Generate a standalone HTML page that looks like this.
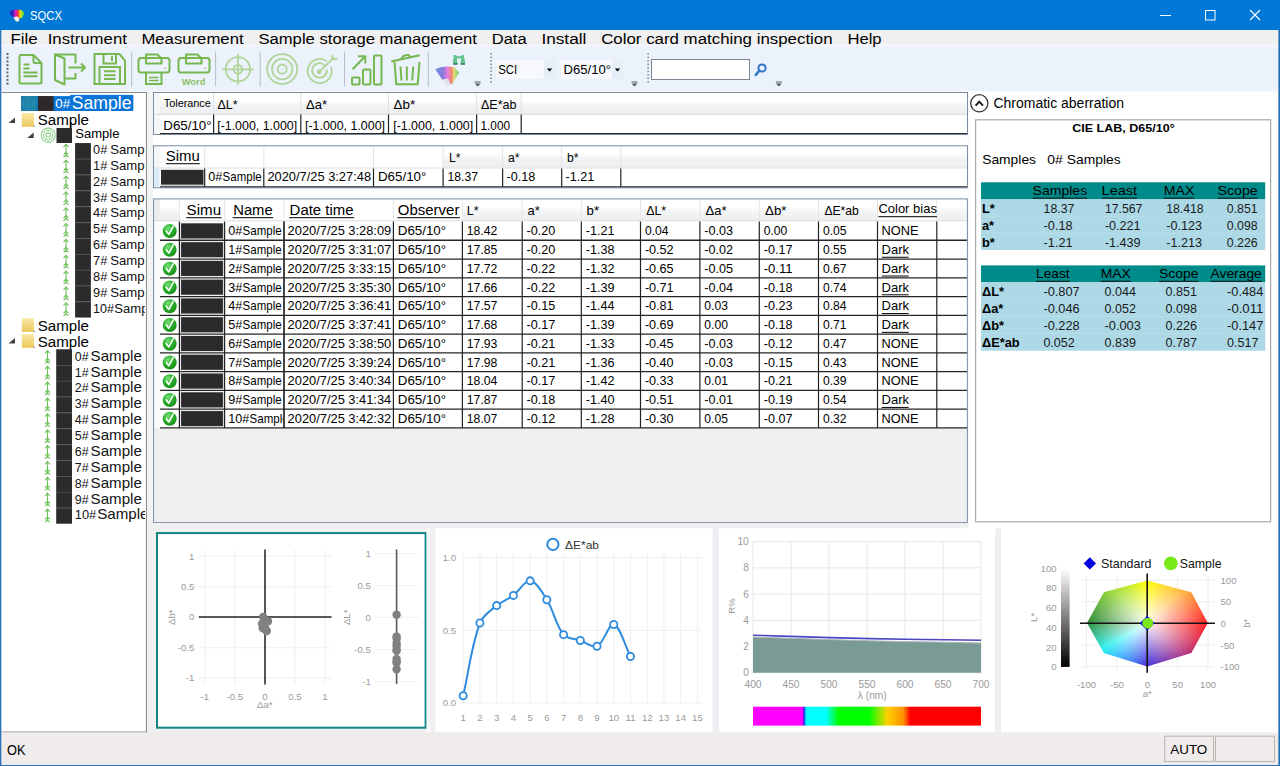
<!DOCTYPE html><html><head><meta charset="utf-8"><title>SQCX</title><style>html,body{margin:0;padding:0;width:1280px;height:766px;overflow:hidden;background:#F0F0F0}svg{display:block;font-family:"Liberation Sans",sans-serif}</style></head><body><svg width="1280" height="766" viewBox="0 0 1280 766"><rect x="0.00" y="0.00" width="1280.00" height="766.00" fill="#F0F0F0"/>
<rect x="0.00" y="0.00" width="1280.00" height="30.00" fill="#0078D7"/>
<text x="30.00" y="20.00" font-size="13" fill="#FFFFFF" textLength="32.00" lengthAdjust="spacingAndGlyphs">SQCX</text>
<defs><linearGradient id="fan" x1="9" y1="0" x2="24.5" y2="0" gradientUnits="userSpaceOnUse"><stop offset="0" stop-color="#3040E0"/><stop offset="0.22" stop-color="#2020B0"/><stop offset="0.4" stop-color="#D020D0"/><stop offset="0.58" stop-color="#F02828"/><stop offset="0.72" stop-color="#E8E020"/><stop offset="1" stop-color="#20D840"/></linearGradient></defs>
<path d="M9.3 12.5 Q11 9.8 15 9.8 L20 9.8 Q23.5 10.5 24 13 Q24 16.5 21 18 L18.5 19 L14.5 17.5 Q10.5 16 9.3 12.5 Z" fill="url(#fan)"/>
<path d="M13.5 17.8 Q16 15.8 18.5 17 L19.3 21.2 Q17 22 15.8 21.2 Z" fill="#F4F0E8"/>
<line x1="1160.00" y1="15.50" x2="1171.00" y2="15.50" stroke="#FFFFFF" stroke-width="1"/>
<rect x="1205.5" y="10.5" width="9.5" height="9.5" fill="none" stroke="#FFFFFF" stroke-width="1"/>
<line x1="1250.00" y1="10.00" x2="1260.00" y2="20.00" stroke="#FFFFFF" stroke-width="1.1"/>
<line x1="1260.00" y1="10.00" x2="1250.00" y2="20.00" stroke="#FFFFFF" stroke-width="1.1"/>
<rect x="0.00" y="30.00" width="1280.00" height="14.60" fill="#F0F0F0"/>
<rect x="0.00" y="44.60" width="1280.00" height="45.60" fill="#EBF2FB"/>
<rect x="0.00" y="90.20" width="1280.00" height="2.00" fill="#F3F5F8"/>
<rect x="0.00" y="44.60" width="1280.00" height="2.20" fill="#F3F6FA"/>
<text x="10.40" y="43.60" font-size="15.4" fill="#000" textLength="27.20" lengthAdjust="spacingAndGlyphs">File</text>
<text x="47.70" y="43.60" font-size="15.4" fill="#000" textLength="79.20" lengthAdjust="spacingAndGlyphs">Instrument</text>
<text x="141.40" y="43.60" font-size="15.4" fill="#000" textLength="102.20" lengthAdjust="spacingAndGlyphs">Measurement</text>
<text x="258.40" y="43.60" font-size="15.4" fill="#000" textLength="218.40" lengthAdjust="spacingAndGlyphs">Sample storage management</text>
<text x="491.70" y="43.60" font-size="15.4" fill="#000" textLength="35.00" lengthAdjust="spacingAndGlyphs">Data</text>
<text x="541.40" y="43.60" font-size="15.4" fill="#000" textLength="45.00" lengthAdjust="spacingAndGlyphs">Install</text>
<text x="601.20" y="43.60" font-size="15.4" fill="#000" textLength="231.40" lengthAdjust="spacingAndGlyphs">Color card matching inspection</text>
<text x="847.40" y="43.60" font-size="15.4" fill="#000" textLength="34.20" lengthAdjust="spacingAndGlyphs">Help</text>
<rect x="6.50" y="53.00" width="2.00" height="2.00" fill="#606870"/>
<rect x="6.50" y="56.70" width="2.00" height="2.00" fill="#606870"/>
<rect x="6.50" y="60.40" width="2.00" height="2.00" fill="#606870"/>
<rect x="6.50" y="64.10" width="2.00" height="2.00" fill="#606870"/>
<rect x="6.50" y="67.80" width="2.00" height="2.00" fill="#606870"/>
<rect x="6.50" y="71.50" width="2.00" height="2.00" fill="#606870"/>
<rect x="6.50" y="75.20" width="2.00" height="2.00" fill="#606870"/>
<rect x="6.50" y="78.90" width="2.00" height="2.00" fill="#606870"/>
<rect x="6.50" y="82.60" width="2.00" height="2.00" fill="#606870"/>
<g fill="none" stroke="#76B74F" stroke-width="2" stroke-linejoin="round"><path d="M19.5 56.5 Q19.5 55 21 55 L33.5 55 L41.5 63 L41.5 82 Q41.5 83.5 40 83.5 L21 83.5 Q19.5 83.5 19.5 82 Z"/><path d="M33.5 55 L33.5 61.5 Q33.5 63 35 63 L41.5 63"/><path d="M23.5 64.6 L29.5 64.6 M23.5 68.5 L29.5 68.5 M23.5 72.4 L37.5 72.4 M23.5 76.3 L37.5 76.3"/></g>
<g fill="none" stroke="#76B74F" stroke-width="2" stroke-linejoin="round"><path d="M55 54.5 L75.5 54.5 L75.5 63.5 M75.5 73 L75.5 78.5 L64.5 78.5"/><path d="M55 54.5 L64.5 58.5 L64.5 84.5 L55 80 Z"/><path d="M68.5 67.5 L85 67.5 M81 63.5 L85 67.5 L81 71.5"/></g>
<g fill="none" stroke="#76B74F" stroke-width="2" stroke-linejoin="miter"><path d="M94.5 54 L119.5 54 L125 60.5 L125 84 L94.5 84 Z"/><path d="M103.5 54 L103.5 63.5 L116 63.5 L116 54"/><path d="M99.5 84 L99.5 67 L120 67 L120 84"/><path d="M104 71.2 L115.5 71.2 M104 75.2 L115.5 75.2 M104 79 L115.5 79"/></g>
<rect x="111.00" y="56.00" width="2.00" height="5.00" fill="#76B74F"/>
<line x1="131.70" y1="51.50" x2="131.70" y2="86.50" stroke="#B9BEC6" stroke-width="1"/>
<line x1="215.60" y1="51.50" x2="215.60" y2="86.50" stroke="#B9BEC6" stroke-width="1"/>
<line x1="260.20" y1="51.50" x2="260.20" y2="86.50" stroke="#B9BEC6" stroke-width="1"/>
<line x1="344.50" y1="51.50" x2="344.50" y2="86.50" stroke="#B9BEC6" stroke-width="1"/>
<line x1="428.30" y1="51.50" x2="428.30" y2="86.50" stroke="#B9BEC6" stroke-width="1"/>
<g fill="none" stroke="#76B74F" stroke-width="2" stroke-linejoin="round"><rect x="138.5" y="58" width="31" height="14.5" rx="2.5"/><path d="M146 58 L146 54.5 L157.5 54.5 L161.5 58.5 L161.5 63.5 L146 63.5 Z"/></g>
<rect x="164.50" y="67.50" width="1.50" height="1.50" fill="#9CC680"/>
<g fill="none" stroke="#76B74F" stroke-width="2"><path d="M146 72.5 L146 84 L161.5 84 L161.5 72.5"/><path d="M149 77.5 L158.5 77.5 M149 80.5 L158.5 80.5" stroke-width="1.5"/></g>
<g fill="none" stroke="#76B74F" stroke-width="2" stroke-linejoin="round"><rect x="178.5" y="58" width="31" height="14.5" rx="2.5"/><path d="M186 58 L186 54.5 L197.5 54.5 L201.5 58.5 L201.5 63.5 L186 63.5 Z"/></g>
<rect x="204.50" y="67.50" width="1.50" height="1.50" fill="#9CC680"/>
<text x="181.80" y="84.60" font-size="9.5" fill="#8CC063" font-weight="bold" textLength="23.50" lengthAdjust="spacingAndGlyphs">Word</text>
<g fill="none" stroke="#B0D598" stroke-width="1.8"><circle cx="237.9" cy="69.3" r="12.2"/><circle cx="237.9" cy="69.3" r="4.3"/><path d="M222 69.3 L253.6 69.3 M237.9 54 L237.9 84.6"/></g>
<g fill="none" stroke="#B0D598" stroke-width="1.8"><circle cx="282.2" cy="69.1" r="15"/><circle cx="282.2" cy="69.1" r="10.2"/><circle cx="282.2" cy="69.1" r="4.6"/></g>
<rect x="281.70" y="68.60" width="1.00" height="1.00" fill="#B0D598"/>
<g fill="none" stroke="#B0D598" stroke-width="1.8"><path d="M327 61.5 A12 12 0 1 0 331 67"/><path d="M325 65.5 A7.3 7.3 0 1 0 326.8 69.5"/><path d="M319.1 71.9 L334 57.5 M332.5 54.5 L332.3 59 L337.3 59"/></g>
<circle cx="319.1" cy="71.9" r="2.3" fill="#B0D598"/>
<g fill="none" stroke="#76B74F" stroke-width="2" stroke-linejoin="round"><rect x="352" y="77.5" width="7.5" height="7" rx="1"/><rect x="363" y="69.5" width="7.5" height="15" rx="1"/><rect x="374" y="55.5" width="7.5" height="29" rx="1"/><path d="M352.6 69.3 L365 56.5 M358 56.3 L365.3 56.3 L365.3 63.5"/></g>
<g fill="none" stroke="#76B74F" stroke-width="2" stroke-linejoin="round"><path d="M394.5 62 L396.3 84.3 L417.7 84.3 L419.5 62"/><path d="M391.2 61.5 L419.8 55.2"/><path d="M401 59.5 Q403 54.5 408.5 55 L411 57.5"/><path d="M400.5 66.5 L401.5 80.5 M406.8 66.5 L406.8 80.5 M413.2 66.5 L412.2 80.5"/></g>
<defs><linearGradient id="fan2" x1="436" y1="0" x2="459" y2="0" gradientUnits="userSpaceOnUse"><stop offset="0" stop-color="#6C8CE0"/><stop offset="0.3" stop-color="#8A7ADC"/><stop offset="0.5" stop-color="#E77CE0"/><stop offset="0.68" stop-color="#F08870"/><stop offset="0.78" stop-color="#E8D878"/><stop offset="1" stop-color="#70D070"/></linearGradient></defs>
<path d="M435.3 69.3 Q444 64.5 454.5 67.6 L459.3 72.6 L452 84 L449.5 84.5 L446.5 80.5 L442 79.2 Z" fill="url(#fan2)"/>
<path d="M443.5 79.2 L448 78.5 L451 85 L446 85.5 Z" fill="#E0E2E8"/>
<g fill="#62C58E"><path d="M453.8 55 L456.3 55 L457.3 62 L458 64 L453 64.5 L452.8 62 Z"/><path d="M461.3 55 L463.8 55 L465 62 L465.2 64.5 L460.5 64 L460.8 62 Z"/><rect x="456" y="56.2" width="5.5" height="2.2"/></g>
<g fill="#3A7058"><rect x="453.2" y="63.3" width="4.5" height="1.5" rx="0.7"/><rect x="460.5" y="63.3" width="4.5" height="1.5" rx="0.7"/></g>
<g fill="#505860"><rect x="474.7" y="81.5" width="6" height="1"/><path d="M474.7 83.5 L480.7 83.5 L477.7 86.5 Z"/></g>
<g fill="#505860"><rect x="631.5" y="81.5" width="6" height="1"/><path d="M631.5 83.5 L637.5 83.5 L634.5 86.5 Z"/></g>
<g fill="#505860"><rect x="775.8" y="81.5" width="6" height="1"/><path d="M775.8 83.5 L781.8 83.5 L778.8 86.5 Z"/></g>
<rect x="490.50" y="53.00" width="1.20" height="1.60" fill="#6A7078"/>
<rect x="490.50" y="56.50" width="1.20" height="1.60" fill="#6A7078"/>
<rect x="490.50" y="60.00" width="1.20" height="1.60" fill="#6A7078"/>
<rect x="490.50" y="63.50" width="1.20" height="1.60" fill="#6A7078"/>
<rect x="490.50" y="67.00" width="1.20" height="1.60" fill="#6A7078"/>
<rect x="490.50" y="70.50" width="1.20" height="1.60" fill="#6A7078"/>
<rect x="490.50" y="74.00" width="1.20" height="1.60" fill="#6A7078"/>
<rect x="490.50" y="77.50" width="1.20" height="1.60" fill="#6A7078"/>
<rect x="490.50" y="81.00" width="1.20" height="1.60" fill="#6A7078"/>
<rect x="647.50" y="53.00" width="1.20" height="1.60" fill="#6A7078"/>
<rect x="647.50" y="56.50" width="1.20" height="1.60" fill="#6A7078"/>
<rect x="647.50" y="60.00" width="1.20" height="1.60" fill="#6A7078"/>
<rect x="647.50" y="63.50" width="1.20" height="1.60" fill="#6A7078"/>
<rect x="647.50" y="67.00" width="1.20" height="1.60" fill="#6A7078"/>
<rect x="647.50" y="70.50" width="1.20" height="1.60" fill="#6A7078"/>
<rect x="647.50" y="74.00" width="1.20" height="1.60" fill="#6A7078"/>
<rect x="647.50" y="77.50" width="1.20" height="1.60" fill="#6A7078"/>
<rect x="647.50" y="81.00" width="1.20" height="1.60" fill="#6A7078"/>
<rect x="496.00" y="60.00" width="59.00" height="18.80" fill="#F7F9FC"/>
<rect x="543.80" y="60.00" width="11.20" height="18.80" fill="#E6EEF8"/>
<text x="498.20" y="73.80" font-size="12.6" fill="#000" textLength="19.00" lengthAdjust="spacingAndGlyphs">SCI</text>
<path d="M546.8 68.6 L552.2 68.6 L549.5 71.6 Z" fill="#000"/>
<rect x="561.00" y="60.00" width="62.00" height="18.80" fill="#F7F9FC"/>
<rect x="612.00" y="60.00" width="11.00" height="18.80" fill="#E6EEF8"/>
<text x="563.50" y="73.80" font-size="12.6" fill="#000" textLength="47.50" lengthAdjust="spacingAndGlyphs">D65/10°</text>
<path d="M614.8 68.6 L620.2 68.6 L617.5 71.6 Z" fill="#000"/>
<rect x="651.5" y="59.5" width="98" height="20" fill="#FFFFFF" stroke="#7A8694" stroke-width="1"/>
<g><circle cx="762" cy="68" r="3.6" fill="none" stroke="#2E74C8" stroke-width="2"/><path d="M759.5 70.5 L755.8 74.8" stroke="#2E74C8" stroke-width="2.6" stroke-linecap="round"/></g>
<rect x="1.50" y="92.00" width="145.50" height="640.50" fill="#FFFFFF"/>
<line x1="1.50" y1="92.50" x2="147.00" y2="92.50" stroke="#888888" stroke-width="1"/>
<line x1="146.50" y1="92.00" x2="146.50" y2="732.50" stroke="#909090" stroke-width="1.2"/>
<line x1="1.50" y1="732.00" x2="147.00" y2="732.00" stroke="#909090" stroke-width="1.2"/>
<rect x="147.00" y="92.00" width="6.00" height="641.00" fill="#F2F3F5"/>
<defs><clipPath id="treeclip"><rect x="2" y="93" width="143" height="639"/></clipPath><linearGradient id="fold" x1="0" y1="0" x2="0" y2="1"><stop offset="0" stop-color="#FBEAA8"/><stop offset="1" stop-color="#E9C75A"/></linearGradient></defs>
<g clip-path="url(#treeclip)">
<rect x="21.00" y="96.10" width="112.20" height="14.90" fill="#0A74D6"/>
<rect x="70.20" y="94.90" width="63.00" height="15.70" fill="#0A74D6"/>
<rect x="21.00" y="96.10" width="16.50" height="14.90" fill="#1B7EA8"/>
<g fill="none" stroke="#2E95B0" stroke-width="1"><circle cx="29.2" cy="103.5" r="6.3"/><circle cx="29.2" cy="103.5" r="3.8"/><circle cx="29.2" cy="103.5" r="1.3"/></g>
<rect x="38.00" y="96.10" width="15.60" height="14.90" fill="#2E2A2A"/>
<text x="55.30" y="107.60" font-size="12.5" fill="#FFFFFF" textLength="14.80" lengthAdjust="spacingAndGlyphs">0#</text>
<text x="71.80" y="109.10" font-size="17.5" fill="#FFFFFF" textLength="59.80" lengthAdjust="spacingAndGlyphs">Sample</text>
<path d="M8.50 123.00 L15.00 123.00 L15.00 117.50 Z" fill="#404040"/>
<rect x="21.8" y="113" width="12.2" height="13.8" fill="url(#fold)"/>
<rect x="33.8" y="125.5" width="1.3" height="1.3" fill="#7A90C8"/>
<text x="37.70" y="124.70" font-size="15.5" fill="#000" textLength="51.20" lengthAdjust="spacingAndGlyphs">Sample</text>
<path d="M27.20 138.00 L33.70 138.00 L33.70 132.50 Z" fill="#404040"/>
<g fill="none" stroke="#8DD08A" stroke-width="1.1"><circle cx="48.2" cy="135.1" r="7"/><circle cx="48.2" cy="135.1" r="4.6"/><circle cx="48.2" cy="135.1" r="2.2"/></g>
<rect x="56.50" y="128.00" width="15.50" height="15.00" fill="#2B2B2D"/>
<line x1="70.80" y1="122.00" x2="70.80" y2="128.00" stroke="#000" stroke-width="1.2"/>
<text x="75.30" y="137.80" font-size="13.6" fill="#000" textLength="44.20" lengthAdjust="spacingAndGlyphs">Sample</text>
<g fill="none" stroke="#6CBF5A" stroke-width="1.1"><path d="M66 144.57999999999998 L66 156.57999999999998"/><path d="M63.5 147.07999999999998 L66 144.27999999999997 L68.5 147.07999999999998"/><path d="M63.5 154.57999999999998 L66 152.38 L68.5 154.57999999999998 M63.5 157.27999999999997 L66 155.07999999999998 L68.5 157.27999999999997"/></g>
<rect x="75.10" y="143.08" width="15.80" height="15.86" fill="#2B2B2D"/>
<text x="93.10" y="153.98" font-size="12.6" fill="#111" textLength="14.20" lengthAdjust="spacingAndGlyphs">0#</text>
<text x="110.30" y="153.98" font-size="13.2" fill="#111" textLength="44.50" lengthAdjust="spacingAndGlyphs">Sample</text>
<g fill="none" stroke="#6CBF5A" stroke-width="1.1"><path d="M66 160.44 L66 172.44"/><path d="M63.5 162.94 L66 160.14 L68.5 162.94"/><path d="M63.5 170.44 L66 168.24 L68.5 170.44 M63.5 173.14 L66 170.94 L68.5 173.14"/></g>
<rect x="75.10" y="158.94" width="15.80" height="15.86" fill="#2B2B2D"/>
<line x1="75.10" y1="159.24" x2="90.90" y2="159.24" stroke="#606060" stroke-width="0.6"/>
<text x="93.10" y="169.84" font-size="12.6" fill="#111" textLength="14.20" lengthAdjust="spacingAndGlyphs">1#</text>
<text x="110.30" y="169.84" font-size="13.2" fill="#111" textLength="44.50" lengthAdjust="spacingAndGlyphs">Sample</text>
<g fill="none" stroke="#6CBF5A" stroke-width="1.1"><path d="M66 176.3 L66 188.3"/><path d="M63.5 178.8 L66 176.0 L68.5 178.8"/><path d="M63.5 186.3 L66 184.10000000000002 L68.5 186.3 M63.5 189.0 L66 186.8 L68.5 189.0"/></g>
<rect x="75.10" y="174.80" width="15.80" height="15.86" fill="#2B2B2D"/>
<line x1="75.10" y1="175.10" x2="90.90" y2="175.10" stroke="#606060" stroke-width="0.6"/>
<text x="93.10" y="185.70" font-size="12.6" fill="#111" textLength="14.20" lengthAdjust="spacingAndGlyphs">2#</text>
<text x="110.30" y="185.70" font-size="13.2" fill="#111" textLength="44.50" lengthAdjust="spacingAndGlyphs">Sample</text>
<g fill="none" stroke="#6CBF5A" stroke-width="1.1"><path d="M66 192.16 L66 204.16"/><path d="M63.5 194.66 L66 191.85999999999999 L68.5 194.66"/><path d="M63.5 202.16 L66 199.96 L68.5 202.16 M63.5 204.85999999999999 L66 202.66 L68.5 204.85999999999999"/></g>
<rect x="75.10" y="190.66" width="15.80" height="15.86" fill="#2B2B2D"/>
<line x1="75.10" y1="190.96" x2="90.90" y2="190.96" stroke="#606060" stroke-width="0.6"/>
<text x="93.10" y="201.56" font-size="12.6" fill="#111" textLength="14.20" lengthAdjust="spacingAndGlyphs">3#</text>
<text x="110.30" y="201.56" font-size="13.2" fill="#111" textLength="44.50" lengthAdjust="spacingAndGlyphs">Sample</text>
<g fill="none" stroke="#6CBF5A" stroke-width="1.1"><path d="M66 208.01999999999998 L66 220.01999999999998"/><path d="M63.5 210.51999999999998 L66 207.71999999999997 L68.5 210.51999999999998"/><path d="M63.5 218.01999999999998 L66 215.82 L68.5 218.01999999999998 M63.5 220.71999999999997 L66 218.51999999999998 L68.5 220.71999999999997"/></g>
<rect x="75.10" y="206.52" width="15.80" height="15.86" fill="#2B2B2D"/>
<line x1="75.10" y1="206.82" x2="90.90" y2="206.82" stroke="#606060" stroke-width="0.6"/>
<text x="93.10" y="217.42" font-size="12.6" fill="#111" textLength="14.20" lengthAdjust="spacingAndGlyphs">4#</text>
<text x="110.30" y="217.42" font-size="13.2" fill="#111" textLength="44.50" lengthAdjust="spacingAndGlyphs">Sample</text>
<g fill="none" stroke="#6CBF5A" stroke-width="1.1"><path d="M66 223.88 L66 235.88"/><path d="M63.5 226.38 L66 223.57999999999998 L68.5 226.38"/><path d="M63.5 233.88 L66 231.68 L68.5 233.88 M63.5 236.57999999999998 L66 234.38 L68.5 236.57999999999998"/></g>
<rect x="75.10" y="222.38" width="15.80" height="15.86" fill="#2B2B2D"/>
<line x1="75.10" y1="222.68" x2="90.90" y2="222.68" stroke="#606060" stroke-width="0.6"/>
<text x="93.10" y="233.28" font-size="12.6" fill="#111" textLength="14.20" lengthAdjust="spacingAndGlyphs">5#</text>
<text x="110.30" y="233.28" font-size="13.2" fill="#111" textLength="44.50" lengthAdjust="spacingAndGlyphs">Sample</text>
<g fill="none" stroke="#6CBF5A" stroke-width="1.1"><path d="M66 239.74 L66 251.74"/><path d="M63.5 242.24 L66 239.44 L68.5 242.24"/><path d="M63.5 249.74 L66 247.54000000000002 L68.5 249.74 M63.5 252.44 L66 250.24 L68.5 252.44"/></g>
<rect x="75.10" y="238.24" width="15.80" height="15.86" fill="#2B2B2D"/>
<line x1="75.10" y1="238.54" x2="90.90" y2="238.54" stroke="#606060" stroke-width="0.6"/>
<text x="93.10" y="249.14" font-size="12.6" fill="#111" textLength="14.20" lengthAdjust="spacingAndGlyphs">6#</text>
<text x="110.30" y="249.14" font-size="13.2" fill="#111" textLength="44.50" lengthAdjust="spacingAndGlyphs">Sample</text>
<g fill="none" stroke="#6CBF5A" stroke-width="1.1"><path d="M66 255.6 L66 267.6"/><path d="M63.5 258.1 L66 255.29999999999998 L68.5 258.1"/><path d="M63.5 265.6 L66 263.4 L68.5 265.6 M63.5 268.3 L66 266.1 L68.5 268.3"/></g>
<rect x="75.10" y="254.10" width="15.80" height="15.86" fill="#2B2B2D"/>
<line x1="75.10" y1="254.40" x2="90.90" y2="254.40" stroke="#606060" stroke-width="0.6"/>
<text x="93.10" y="265.00" font-size="12.6" fill="#111" textLength="14.20" lengthAdjust="spacingAndGlyphs">7#</text>
<text x="110.30" y="265.00" font-size="13.2" fill="#111" textLength="44.50" lengthAdjust="spacingAndGlyphs">Sample</text>
<g fill="none" stroke="#6CBF5A" stroke-width="1.1"><path d="M66 271.46 L66 283.46"/><path d="M63.5 273.96 L66 271.15999999999997 L68.5 273.96"/><path d="M63.5 281.46 L66 279.26 L68.5 281.46 M63.5 284.15999999999997 L66 281.96 L68.5 284.15999999999997"/></g>
<rect x="75.10" y="269.96" width="15.80" height="15.86" fill="#2B2B2D"/>
<line x1="75.10" y1="270.26" x2="90.90" y2="270.26" stroke="#606060" stroke-width="0.6"/>
<text x="93.10" y="280.86" font-size="12.6" fill="#111" textLength="14.20" lengthAdjust="spacingAndGlyphs">8#</text>
<text x="110.30" y="280.86" font-size="13.2" fill="#111" textLength="44.50" lengthAdjust="spacingAndGlyphs">Sample</text>
<g fill="none" stroke="#6CBF5A" stroke-width="1.1"><path d="M66 287.32 L66 299.32"/><path d="M63.5 289.82 L66 287.02 L68.5 289.82"/><path d="M63.5 297.32 L66 295.12 L68.5 297.32 M63.5 300.02 L66 297.82 L68.5 300.02"/></g>
<rect x="75.10" y="285.82" width="15.80" height="15.86" fill="#2B2B2D"/>
<line x1="75.10" y1="286.12" x2="90.90" y2="286.12" stroke="#606060" stroke-width="0.6"/>
<text x="93.10" y="296.72" font-size="12.6" fill="#111" textLength="14.20" lengthAdjust="spacingAndGlyphs">9#</text>
<text x="110.30" y="296.72" font-size="13.2" fill="#111" textLength="44.50" lengthAdjust="spacingAndGlyphs">Sample</text>
<g fill="none" stroke="#6CBF5A" stroke-width="1.1"><path d="M66 303.18 L66 315.18"/><path d="M63.5 305.68 L66 302.88 L68.5 305.68"/><path d="M63.5 313.18 L66 310.98 L68.5 313.18 M63.5 315.88 L66 313.68 L68.5 315.88"/></g>
<rect x="75.10" y="301.68" width="15.80" height="15.86" fill="#2B2B2D"/>
<line x1="75.10" y1="301.98" x2="90.90" y2="301.98" stroke="#606060" stroke-width="0.6"/>
<text x="93.10" y="312.58" font-size="12.6" fill="#111" textLength="21.00" lengthAdjust="spacingAndGlyphs">10#</text>
<text x="114.30" y="312.58" font-size="13.2" fill="#111" textLength="44.50" lengthAdjust="spacingAndGlyphs">Sample</text>
<rect x="21.8" y="318.14" width="12.2" height="13.8" fill="url(#fold)"/>
<rect x="33.8" y="330.64" width="1.3" height="1.3" fill="#7A90C8"/>
<text x="37.70" y="330.74" font-size="15.5" fill="#000" textLength="51.20" lengthAdjust="spacingAndGlyphs">Sample</text>
<path d="M8.50 343.40 L15.00 343.40 L15.00 337.90 Z" fill="#404040"/>
<rect x="21.8" y="334.0" width="12.2" height="13.8" fill="url(#fold)"/>
<rect x="33.8" y="346.5" width="1.3" height="1.3" fill="#7A90C8"/>
<text x="37.70" y="346.60" font-size="15.5" fill="#000" textLength="51.20" lengthAdjust="spacingAndGlyphs">Sample</text>
<g fill="none" stroke="#6CBF5A" stroke-width="1.1"><path d="M47.5 350.76 L47.5 362.76"/><path d="M45.0 353.26 L47.5 350.46 L50.0 353.26"/><path d="M45.0 360.76 L47.5 358.56 L50.0 360.76 M45.0 363.46 L47.5 361.26 L50.0 363.46"/></g>
<rect x="56.20" y="349.26" width="15.80" height="15.86" fill="#2B2B2D"/>
<text x="74.80" y="360.76" font-size="13.2" fill="#111" textLength="13.80" lengthAdjust="spacingAndGlyphs">0#</text>
<text x="90.60" y="360.76" font-size="15" fill="#111" textLength="51.20" lengthAdjust="spacingAndGlyphs">Sample</text>
<g fill="none" stroke="#6CBF5A" stroke-width="1.1"><path d="M47.5 366.62 L47.5 378.62"/><path d="M45.0 369.12 L47.5 366.32 L50.0 369.12"/><path d="M45.0 376.62 L47.5 374.42 L50.0 376.62 M45.0 379.32 L47.5 377.12 L50.0 379.32"/></g>
<rect x="56.20" y="365.12" width="15.80" height="15.86" fill="#2B2B2D"/>
<line x1="56.20" y1="365.42" x2="72.00" y2="365.42" stroke="#606060" stroke-width="0.6"/>
<text x="74.80" y="376.62" font-size="13.2" fill="#111" textLength="13.80" lengthAdjust="spacingAndGlyphs">1#</text>
<text x="90.60" y="376.62" font-size="15" fill="#111" textLength="51.20" lengthAdjust="spacingAndGlyphs">Sample</text>
<g fill="none" stroke="#6CBF5A" stroke-width="1.1"><path d="M47.5 382.48 L47.5 394.48"/><path d="M45.0 384.98 L47.5 382.18 L50.0 384.98"/><path d="M45.0 392.48 L47.5 390.28000000000003 L50.0 392.48 M45.0 395.18 L47.5 392.98 L50.0 395.18"/></g>
<rect x="56.20" y="380.98" width="15.80" height="15.86" fill="#2B2B2D"/>
<line x1="56.20" y1="381.28" x2="72.00" y2="381.28" stroke="#606060" stroke-width="0.6"/>
<text x="74.80" y="392.48" font-size="13.2" fill="#111" textLength="13.80" lengthAdjust="spacingAndGlyphs">2#</text>
<text x="90.60" y="392.48" font-size="15" fill="#111" textLength="51.20" lengthAdjust="spacingAndGlyphs">Sample</text>
<g fill="none" stroke="#6CBF5A" stroke-width="1.1"><path d="M47.5 398.34 L47.5 410.34"/><path d="M45.0 400.84 L47.5 398.03999999999996 L50.0 400.84"/><path d="M45.0 408.34 L47.5 406.14 L50.0 408.34 M45.0 411.03999999999996 L47.5 408.84 L50.0 411.03999999999996"/></g>
<rect x="56.20" y="396.84" width="15.80" height="15.86" fill="#2B2B2D"/>
<line x1="56.20" y1="397.14" x2="72.00" y2="397.14" stroke="#606060" stroke-width="0.6"/>
<text x="74.80" y="408.34" font-size="13.2" fill="#111" textLength="13.80" lengthAdjust="spacingAndGlyphs">3#</text>
<text x="90.60" y="408.34" font-size="15" fill="#111" textLength="51.20" lengthAdjust="spacingAndGlyphs">Sample</text>
<g fill="none" stroke="#6CBF5A" stroke-width="1.1"><path d="M47.5 414.2 L47.5 426.2"/><path d="M45.0 416.7 L47.5 413.9 L50.0 416.7"/><path d="M45.0 424.2 L47.5 422.0 L50.0 424.2 M45.0 426.9 L47.5 424.7 L50.0 426.9"/></g>
<rect x="56.20" y="412.70" width="15.80" height="15.86" fill="#2B2B2D"/>
<line x1="56.20" y1="413.00" x2="72.00" y2="413.00" stroke="#606060" stroke-width="0.6"/>
<text x="74.80" y="424.20" font-size="13.2" fill="#111" textLength="13.80" lengthAdjust="spacingAndGlyphs">4#</text>
<text x="90.60" y="424.20" font-size="15" fill="#111" textLength="51.20" lengthAdjust="spacingAndGlyphs">Sample</text>
<g fill="none" stroke="#6CBF5A" stroke-width="1.1"><path d="M47.5 430.06 L47.5 442.06"/><path d="M45.0 432.56 L47.5 429.76 L50.0 432.56"/><path d="M45.0 440.06 L47.5 437.86 L50.0 440.06 M45.0 442.76 L47.5 440.56 L50.0 442.76"/></g>
<rect x="56.20" y="428.56" width="15.80" height="15.86" fill="#2B2B2D"/>
<line x1="56.20" y1="428.86" x2="72.00" y2="428.86" stroke="#606060" stroke-width="0.6"/>
<text x="74.80" y="440.06" font-size="13.2" fill="#111" textLength="13.80" lengthAdjust="spacingAndGlyphs">5#</text>
<text x="90.60" y="440.06" font-size="15" fill="#111" textLength="51.20" lengthAdjust="spacingAndGlyphs">Sample</text>
<g fill="none" stroke="#6CBF5A" stroke-width="1.1"><path d="M47.5 445.91999999999996 L47.5 457.91999999999996"/><path d="M45.0 448.41999999999996 L47.5 445.61999999999995 L50.0 448.41999999999996"/><path d="M45.0 455.91999999999996 L47.5 453.71999999999997 L50.0 455.91999999999996 M45.0 458.61999999999995 L47.5 456.41999999999996 L50.0 458.61999999999995"/></g>
<rect x="56.20" y="444.42" width="15.80" height="15.86" fill="#2B2B2D"/>
<line x1="56.20" y1="444.72" x2="72.00" y2="444.72" stroke="#606060" stroke-width="0.6"/>
<text x="74.80" y="455.92" font-size="13.2" fill="#111" textLength="13.80" lengthAdjust="spacingAndGlyphs">6#</text>
<text x="90.60" y="455.92" font-size="15" fill="#111" textLength="51.20" lengthAdjust="spacingAndGlyphs">Sample</text>
<g fill="none" stroke="#6CBF5A" stroke-width="1.1"><path d="M47.5 461.78 L47.5 473.78"/><path d="M45.0 464.28 L47.5 461.47999999999996 L50.0 464.28"/><path d="M45.0 471.78 L47.5 469.58 L50.0 471.78 M45.0 474.47999999999996 L47.5 472.28 L50.0 474.47999999999996"/></g>
<rect x="56.20" y="460.28" width="15.80" height="15.86" fill="#2B2B2D"/>
<line x1="56.20" y1="460.58" x2="72.00" y2="460.58" stroke="#606060" stroke-width="0.6"/>
<text x="74.80" y="471.78" font-size="13.2" fill="#111" textLength="13.80" lengthAdjust="spacingAndGlyphs">7#</text>
<text x="90.60" y="471.78" font-size="15" fill="#111" textLength="51.20" lengthAdjust="spacingAndGlyphs">Sample</text>
<g fill="none" stroke="#6CBF5A" stroke-width="1.1"><path d="M47.5 477.64 L47.5 489.64"/><path d="M45.0 480.14 L47.5 477.34 L50.0 480.14"/><path d="M45.0 487.64 L47.5 485.44 L50.0 487.64 M45.0 490.34 L47.5 488.14 L50.0 490.34"/></g>
<rect x="56.20" y="476.14" width="15.80" height="15.86" fill="#2B2B2D"/>
<line x1="56.20" y1="476.44" x2="72.00" y2="476.44" stroke="#606060" stroke-width="0.6"/>
<text x="74.80" y="487.64" font-size="13.2" fill="#111" textLength="13.80" lengthAdjust="spacingAndGlyphs">8#</text>
<text x="90.60" y="487.64" font-size="15" fill="#111" textLength="51.20" lengthAdjust="spacingAndGlyphs">Sample</text>
<g fill="none" stroke="#6CBF5A" stroke-width="1.1"><path d="M47.5 493.5 L47.5 505.5"/><path d="M45.0 496.0 L47.5 493.2 L50.0 496.0"/><path d="M45.0 503.5 L47.5 501.3 L50.0 503.5 M45.0 506.2 L47.5 504.0 L50.0 506.2"/></g>
<rect x="56.20" y="492.00" width="15.80" height="15.86" fill="#2B2B2D"/>
<line x1="56.20" y1="492.30" x2="72.00" y2="492.30" stroke="#606060" stroke-width="0.6"/>
<text x="74.80" y="503.50" font-size="13.2" fill="#111" textLength="13.80" lengthAdjust="spacingAndGlyphs">9#</text>
<text x="90.60" y="503.50" font-size="15" fill="#111" textLength="51.20" lengthAdjust="spacingAndGlyphs">Sample</text>
<g fill="none" stroke="#6CBF5A" stroke-width="1.1"><path d="M47.5 509.36 L47.5 521.36"/><path d="M45.0 511.86 L47.5 509.06 L50.0 511.86"/><path d="M45.0 519.36 L47.5 517.16 L50.0 519.36 M45.0 522.0600000000001 L47.5 519.86 L50.0 522.0600000000001"/></g>
<rect x="56.20" y="507.86" width="15.80" height="15.86" fill="#2B2B2D"/>
<line x1="56.20" y1="508.16" x2="72.00" y2="508.16" stroke="#606060" stroke-width="0.6"/>
<text x="74.80" y="519.36" font-size="13.2" fill="#111" textLength="21.50" lengthAdjust="spacingAndGlyphs">10#</text>
<text x="97.20" y="519.36" font-size="15" fill="#111" textLength="51.20" lengthAdjust="spacingAndGlyphs">Sample</text>
</g>
<defs><linearGradient id="hdrg" x1="0" y1="0" x2="0" y2="1"><stop offset="0" stop-color="#FFFFFF"/><stop offset="0.36" stop-color="#FFFFFF"/><stop offset="0.56" stop-color="#F3F4F6"/><stop offset="1" stop-color="#EDEEF0"/></linearGradient><radialGradient id="chk" cx="0.38" cy="0.3" r="0.75"><stop offset="0" stop-color="#7BE07B"/><stop offset="0.45" stop-color="#2FB52F"/><stop offset="1" stop-color="#178A17"/></radialGradient></defs>
<rect x="153.00" y="91.50" width="815.50" height="431.00" fill="#FFFFFF"/>
<rect x="153.50" y="92.40" width="814.00" height="42.50" fill="#FFFFFF"/>
<rect x="154.00" y="93.00" width="813.00" height="21.00" fill="url(#hdrg)"/>
<rect x="154.00" y="93.00" width="6.00" height="41.00" fill="#F6F6F6"/>
<line x1="154.00" y1="114.30" x2="967.00" y2="114.30" stroke="#D9D9D9" stroke-width="1"/>
<line x1="213.60" y1="93.00" x2="213.60" y2="114.00" stroke="#E2E2E2" stroke-width="1"/>
<line x1="213.60" y1="114.50" x2="213.60" y2="133.50" stroke="#222" stroke-width="1.2"/>
<line x1="300.80" y1="93.00" x2="300.80" y2="114.00" stroke="#E2E2E2" stroke-width="1"/>
<line x1="300.80" y1="114.50" x2="300.80" y2="133.50" stroke="#222" stroke-width="1.2"/>
<line x1="388.50" y1="93.00" x2="388.50" y2="114.00" stroke="#E2E2E2" stroke-width="1"/>
<line x1="388.50" y1="114.50" x2="388.50" y2="133.50" stroke="#222" stroke-width="1.2"/>
<line x1="476.60" y1="93.00" x2="476.60" y2="114.00" stroke="#E2E2E2" stroke-width="1"/>
<line x1="476.60" y1="114.50" x2="476.60" y2="133.50" stroke="#222" stroke-width="1.2"/>
<line x1="521.20" y1="93.00" x2="521.20" y2="114.00" stroke="#E2E2E2" stroke-width="1"/>
<line x1="521.20" y1="114.50" x2="521.20" y2="133.50" stroke="#222" stroke-width="1.2"/>
<line x1="160.00" y1="133.60" x2="967.00" y2="133.60" stroke="#2A2A2A" stroke-width="1.4"/>
<rect x="153.5" y="92.5" width="814" height="42" fill="none" stroke="#7B8CA0" stroke-width="1"/>
<text x="163.80" y="106.80" font-size="11" fill="#000" textLength="47.00" lengthAdjust="spacingAndGlyphs">Tolerance</text>
<text x="217.60" y="108.70" font-size="12.8" fill="#000" textLength="20.00" lengthAdjust="spacingAndGlyphs">ΔL*</text>
<text x="306.00" y="108.70" font-size="12.8" fill="#000" textLength="21.00" lengthAdjust="spacingAndGlyphs">Δa*</text>
<text x="393.60" y="108.70" font-size="12.8" fill="#000" textLength="21.50" lengthAdjust="spacingAndGlyphs">Δb*</text>
<text x="481.00" y="108.70" font-size="12.8" fill="#000" textLength="35.50" lengthAdjust="spacingAndGlyphs">ΔE*ab</text>
<text x="163.30" y="129.60" font-size="13.33" fill="#000" textLength="48.30" lengthAdjust="spacingAndGlyphs">D65/10°</text>
<text x="217.20" y="129.60" font-size="13.33" fill="#000" textLength="80.00" lengthAdjust="spacingAndGlyphs">[-1.000, 1.000]</text>
<text x="305.00" y="129.60" font-size="13.33" fill="#000" textLength="80.00" lengthAdjust="spacingAndGlyphs">[-1.000, 1.000]</text>
<text x="393.20" y="129.60" font-size="13.33" fill="#000" textLength="80.00" lengthAdjust="spacingAndGlyphs">[-1.000, 1.000]</text>
<text x="480.50" y="129.60" font-size="13.33" fill="#000" textLength="29.50" lengthAdjust="spacingAndGlyphs">1.000</text>
<rect x="153.50" y="145.60" width="814.00" height="42.40" fill="#FFFFFF"/>
<rect x="154.00" y="146.00" width="6.00" height="41.00" fill="#F6F6F6"/>
<rect x="443.10" y="146.20" width="524.00" height="21.60" fill="url(#hdrg)"/>
<line x1="154.00" y1="168.00" x2="967.00" y2="168.00" stroke="#DEDEDE" stroke-width="1"/>
<line x1="204.70" y1="146.20" x2="204.70" y2="168.00" stroke="#E4E4E4" stroke-width="1"/>
<line x1="204.70" y1="168.50" x2="204.70" y2="187.00" stroke="#222" stroke-width="1.2"/>
<line x1="263.80" y1="146.20" x2="263.80" y2="168.00" stroke="#E4E4E4" stroke-width="1"/>
<line x1="263.80" y1="168.50" x2="263.80" y2="187.00" stroke="#222" stroke-width="1.2"/>
<line x1="373.50" y1="146.20" x2="373.50" y2="168.00" stroke="#E4E4E4" stroke-width="1"/>
<line x1="373.50" y1="168.50" x2="373.50" y2="187.00" stroke="#222" stroke-width="1.2"/>
<line x1="443.10" y1="146.20" x2="443.10" y2="168.00" stroke="#E4E4E4" stroke-width="1"/>
<line x1="443.10" y1="168.50" x2="443.10" y2="187.00" stroke="#222" stroke-width="1.2"/>
<line x1="502.60" y1="146.20" x2="502.60" y2="168.00" stroke="#E4E4E4" stroke-width="1"/>
<line x1="502.60" y1="168.50" x2="502.60" y2="187.00" stroke="#222" stroke-width="1.2"/>
<line x1="561.70" y1="146.20" x2="561.70" y2="168.00" stroke="#E4E4E4" stroke-width="1"/>
<line x1="561.70" y1="168.50" x2="561.70" y2="187.00" stroke="#222" stroke-width="1.2"/>
<line x1="620.80" y1="146.20" x2="620.80" y2="168.00" stroke="#E4E4E4" stroke-width="1"/>
<line x1="620.80" y1="168.50" x2="620.80" y2="187.00" stroke="#222" stroke-width="1.2"/>
<line x1="160.00" y1="187.00" x2="967.00" y2="187.00" stroke="#2A2A2A" stroke-width="1.4"/>
<rect x="153.5" y="145.8" width="814" height="42" fill="none" stroke="#7B8CA0" stroke-width="1"/>
<rect x="154.20" y="169.00" width="5.00" height="18.00" fill="#DCEBF8"/>
<text x="165.80" y="160.70" font-size="14.8" fill="#000" textLength="34.00" lengthAdjust="spacingAndGlyphs">Simu</text>
<line x1="166.00" y1="163.60" x2="199.80" y2="163.60" stroke="#303030" stroke-width="1.2"/>
<rect x="161.00" y="169.80" width="42.50" height="15.00" fill="#2B2B2D"/>
<line x1="160.50" y1="185.20" x2="204.00" y2="185.20" stroke="#B8B8B8" stroke-width="1"/>
<text x="208.30" y="181.40" font-size="12.3" fill="#000" textLength="14.00" lengthAdjust="spacingAndGlyphs">0#</text>
<text x="222.60" y="181.40" font-size="13.2" fill="#000" textLength="39.00" lengthAdjust="spacingAndGlyphs">Sample</text>
<text x="267.40" y="181.40" font-size="13.33" fill="#000" textLength="103.64" lengthAdjust="spacingAndGlyphs">2020/7/25 3:27:48</text>
<text x="378.00" y="181.40" font-size="13.33" fill="#000" textLength="48.30" lengthAdjust="spacingAndGlyphs">D65/10°</text>
<text x="447.50" y="181.40" font-size="13.33" fill="#000" textLength="30.57" lengthAdjust="spacingAndGlyphs">18.37</text>
<text x="506.50" y="181.40" font-size="13.33" fill="#000" textLength="28.75" lengthAdjust="spacingAndGlyphs">-0.18</text>
<text x="565.50" y="181.40" font-size="13.33" fill="#000" textLength="28.75" lengthAdjust="spacingAndGlyphs">-1.21</text>
<text x="449.00" y="161.70" font-size="12.5" fill="#000" textLength="11.50" lengthAdjust="spacingAndGlyphs">L*</text>
<text x="508.00" y="161.70" font-size="12.5" fill="#000" textLength="11.50" lengthAdjust="spacingAndGlyphs">a*</text>
<text x="567.00" y="161.70" font-size="12.5" fill="#000" textLength="11.50" lengthAdjust="spacingAndGlyphs">b*</text>
<rect x="153.50" y="198.80" width="814.00" height="323.80" fill="#EFEFEF"/>
<rect x="154.00" y="199.00" width="813.00" height="22.00" fill="#FFFFFF"/>
<rect x="160.00" y="199.20" width="19.40" height="21.60" fill="url(#hdrg)"/>
<rect x="462.40" y="199.20" width="415.10" height="21.60" fill="url(#hdrg)"/>
<rect x="936.80" y="199.20" width="30.20" height="21.60" fill="url(#hdrg)"/>
<rect x="154.00" y="199.20" width="6.00" height="21.60" fill="#EEEEEE"/>
<line x1="154.00" y1="220.80" x2="967.00" y2="220.80" stroke="#DCDCDC" stroke-width="1"/>
<line x1="179.40" y1="199.20" x2="179.40" y2="220.50" stroke="#E6E6E6" stroke-width="1"/>
<line x1="224.60" y1="199.20" x2="224.60" y2="220.50" stroke="#E6E6E6" stroke-width="1"/>
<line x1="284.00" y1="199.20" x2="284.00" y2="220.50" stroke="#E6E6E6" stroke-width="1"/>
<line x1="393.40" y1="199.20" x2="393.40" y2="220.50" stroke="#E6E6E6" stroke-width="1"/>
<line x1="462.40" y1="199.20" x2="462.40" y2="220.50" stroke="#E6E6E6" stroke-width="1"/>
<line x1="522.20" y1="199.20" x2="522.20" y2="220.50" stroke="#E6E6E6" stroke-width="1"/>
<line x1="581.30" y1="199.20" x2="581.30" y2="220.50" stroke="#E6E6E6" stroke-width="1"/>
<line x1="640.50" y1="199.20" x2="640.50" y2="220.50" stroke="#E6E6E6" stroke-width="1"/>
<line x1="699.90" y1="199.20" x2="699.90" y2="220.50" stroke="#E6E6E6" stroke-width="1"/>
<line x1="759.30" y1="199.20" x2="759.30" y2="220.50" stroke="#E6E6E6" stroke-width="1"/>
<line x1="818.50" y1="199.20" x2="818.50" y2="220.50" stroke="#E6E6E6" stroke-width="1"/>
<line x1="877.50" y1="199.20" x2="877.50" y2="220.50" stroke="#E6E6E6" stroke-width="1"/>
<line x1="936.80" y1="199.20" x2="936.80" y2="220.50" stroke="#E6E6E6" stroke-width="1"/>
<rect x="160.00" y="221.50" width="807.00" height="206.47" fill="#FFFFFF"/>
<defs><clipPath id="namecl"><rect x="225" y="0" width="58.4" height="766"/></clipPath></defs>
<rect x="154.20" y="221.50" width="5.60" height="206.47" fill="#FAFBFC"/>
<circle cx="169.7" cy="231.10" r="7" fill="url(#chk)"/>
<path d="M166.2 230.90 L168.8 234.30 L173.2 226.30" fill="none" stroke="#FFFFFF" stroke-width="1.6" stroke-linejoin="round" stroke-linecap="round"/>
<rect x="180.40" y="222.80" width="43.50" height="16.20" fill="#D4D4D4"/>
<rect x="181.10" y="223.40" width="41.80" height="15.00" fill="#2B2B2D"/>
<text x="228.30" y="235.30" font-size="12.3" fill="#000" textLength="14.00" lengthAdjust="spacingAndGlyphs">0#</text>
<text x="242.60" y="235.30" font-size="13.2" fill="#000" textLength="39.00" lengthAdjust="spacingAndGlyphs">Sample</text>
<text x="287.60" y="235.30" font-size="13.33" fill="#000" textLength="103.64" lengthAdjust="spacingAndGlyphs">2020/7/25 3:28:09</text>
<text x="397.80" y="235.30" font-size="13.33" fill="#000" textLength="48.30" lengthAdjust="spacingAndGlyphs">D65/10°</text>
<text x="466.80" y="235.30" font-size="13.33" fill="#000" textLength="30.57" lengthAdjust="spacingAndGlyphs">18.42</text>
<text x="526.60" y="235.30" font-size="13.33" fill="#000" textLength="28.75" lengthAdjust="spacingAndGlyphs">-0.20</text>
<text x="585.70" y="235.30" font-size="13.33" fill="#000" textLength="28.75" lengthAdjust="spacingAndGlyphs">-1.21</text>
<text x="644.90" y="235.30" font-size="13.33" fill="#000" textLength="23.61" lengthAdjust="spacingAndGlyphs">0.04</text>
<text x="704.30" y="235.30" font-size="13.33" fill="#000" textLength="28.75" lengthAdjust="spacingAndGlyphs">-0.03</text>
<text x="763.70" y="235.30" font-size="13.33" fill="#000" textLength="23.61" lengthAdjust="spacingAndGlyphs">0.00</text>
<text x="822.90" y="235.30" font-size="13.33" fill="#000" textLength="23.61" lengthAdjust="spacingAndGlyphs">0.05</text>
<text x="881.60" y="235.30" font-size="13.33" fill="#000" textLength="37.00" lengthAdjust="spacingAndGlyphs">NONE</text>
<line x1="160.00" y1="240.27" x2="967.00" y2="240.27" stroke="#262626" stroke-width="1.3"/>
<circle cx="169.7" cy="249.87" r="7" fill="url(#chk)"/>
<path d="M166.2 249.67 L168.8 253.07 L173.2 245.07" fill="none" stroke="#FFFFFF" stroke-width="1.6" stroke-linejoin="round" stroke-linecap="round"/>
<rect x="180.40" y="241.57" width="43.50" height="16.20" fill="#D4D4D4"/>
<rect x="181.10" y="242.17" width="41.80" height="15.00" fill="#2B2B2D"/>
<text x="228.30" y="254.07" font-size="12.3" fill="#000" textLength="14.00" lengthAdjust="spacingAndGlyphs">1#</text>
<text x="242.60" y="254.07" font-size="13.2" fill="#000" textLength="39.00" lengthAdjust="spacingAndGlyphs">Sample</text>
<text x="287.60" y="254.07" font-size="13.33" fill="#000" textLength="103.64" lengthAdjust="spacingAndGlyphs">2020/7/25 3:31:07</text>
<text x="397.80" y="254.07" font-size="13.33" fill="#000" textLength="48.30" lengthAdjust="spacingAndGlyphs">D65/10°</text>
<text x="466.80" y="254.07" font-size="13.33" fill="#000" textLength="30.57" lengthAdjust="spacingAndGlyphs">17.85</text>
<text x="526.60" y="254.07" font-size="13.33" fill="#000" textLength="28.75" lengthAdjust="spacingAndGlyphs">-0.20</text>
<text x="585.70" y="254.07" font-size="13.33" fill="#000" textLength="28.75" lengthAdjust="spacingAndGlyphs">-1.38</text>
<text x="644.90" y="254.07" font-size="13.33" fill="#000" textLength="28.75" lengthAdjust="spacingAndGlyphs">-0.52</text>
<text x="704.30" y="254.07" font-size="13.33" fill="#000" textLength="28.75" lengthAdjust="spacingAndGlyphs">-0.02</text>
<text x="763.70" y="254.07" font-size="13.33" fill="#000" textLength="28.75" lengthAdjust="spacingAndGlyphs">-0.17</text>
<text x="822.90" y="254.07" font-size="13.33" fill="#000" textLength="23.61" lengthAdjust="spacingAndGlyphs">0.55</text>
<text x="881.60" y="254.07" font-size="13.33" fill="#000" textLength="27.50" lengthAdjust="spacingAndGlyphs">Dark</text>
<line x1="881.80" y1="257.27" x2="908.60" y2="257.27" stroke="#000" stroke-width="1"/>
<line x1="160.00" y1="259.04" x2="967.00" y2="259.04" stroke="#262626" stroke-width="1.3"/>
<circle cx="169.7" cy="268.64" r="7" fill="url(#chk)"/>
<path d="M166.2 268.44 L168.8 271.84 L173.2 263.84" fill="none" stroke="#FFFFFF" stroke-width="1.6" stroke-linejoin="round" stroke-linecap="round"/>
<rect x="180.40" y="260.34" width="43.50" height="16.20" fill="#D4D4D4"/>
<rect x="181.10" y="260.94" width="41.80" height="15.00" fill="#2B2B2D"/>
<text x="228.30" y="272.84" font-size="12.3" fill="#000" textLength="14.00" lengthAdjust="spacingAndGlyphs">2#</text>
<text x="242.60" y="272.84" font-size="13.2" fill="#000" textLength="39.00" lengthAdjust="spacingAndGlyphs">Sample</text>
<text x="287.60" y="272.84" font-size="13.33" fill="#000" textLength="103.64" lengthAdjust="spacingAndGlyphs">2020/7/25 3:33:15</text>
<text x="397.80" y="272.84" font-size="13.33" fill="#000" textLength="48.30" lengthAdjust="spacingAndGlyphs">D65/10°</text>
<text x="466.80" y="272.84" font-size="13.33" fill="#000" textLength="30.57" lengthAdjust="spacingAndGlyphs">17.72</text>
<text x="526.60" y="272.84" font-size="13.33" fill="#000" textLength="28.75" lengthAdjust="spacingAndGlyphs">-0.22</text>
<text x="585.70" y="272.84" font-size="13.33" fill="#000" textLength="28.75" lengthAdjust="spacingAndGlyphs">-1.32</text>
<text x="644.90" y="272.84" font-size="13.33" fill="#000" textLength="28.75" lengthAdjust="spacingAndGlyphs">-0.65</text>
<text x="704.30" y="272.84" font-size="13.33" fill="#000" textLength="28.75" lengthAdjust="spacingAndGlyphs">-0.05</text>
<text x="763.70" y="272.84" font-size="13.33" fill="#000" textLength="28.75" lengthAdjust="spacingAndGlyphs">-0.11</text>
<text x="822.90" y="272.84" font-size="13.33" fill="#000" textLength="23.61" lengthAdjust="spacingAndGlyphs">0.67</text>
<text x="881.60" y="272.84" font-size="13.33" fill="#000" textLength="27.50" lengthAdjust="spacingAndGlyphs">Dark</text>
<line x1="881.80" y1="276.04" x2="908.60" y2="276.04" stroke="#000" stroke-width="1"/>
<line x1="160.00" y1="277.81" x2="967.00" y2="277.81" stroke="#262626" stroke-width="1.3"/>
<circle cx="169.7" cy="287.41" r="7" fill="url(#chk)"/>
<path d="M166.2 287.21 L168.8 290.61 L173.2 282.61" fill="none" stroke="#FFFFFF" stroke-width="1.6" stroke-linejoin="round" stroke-linecap="round"/>
<rect x="180.40" y="279.11" width="43.50" height="16.20" fill="#D4D4D4"/>
<rect x="181.10" y="279.71" width="41.80" height="15.00" fill="#2B2B2D"/>
<text x="228.30" y="291.61" font-size="12.3" fill="#000" textLength="14.00" lengthAdjust="spacingAndGlyphs">3#</text>
<text x="242.60" y="291.61" font-size="13.2" fill="#000" textLength="39.00" lengthAdjust="spacingAndGlyphs">Sample</text>
<text x="287.60" y="291.61" font-size="13.33" fill="#000" textLength="103.64" lengthAdjust="spacingAndGlyphs">2020/7/25 3:35:30</text>
<text x="397.80" y="291.61" font-size="13.33" fill="#000" textLength="48.30" lengthAdjust="spacingAndGlyphs">D65/10°</text>
<text x="466.80" y="291.61" font-size="13.33" fill="#000" textLength="30.57" lengthAdjust="spacingAndGlyphs">17.66</text>
<text x="526.60" y="291.61" font-size="13.33" fill="#000" textLength="28.75" lengthAdjust="spacingAndGlyphs">-0.22</text>
<text x="585.70" y="291.61" font-size="13.33" fill="#000" textLength="28.75" lengthAdjust="spacingAndGlyphs">-1.39</text>
<text x="644.90" y="291.61" font-size="13.33" fill="#000" textLength="28.75" lengthAdjust="spacingAndGlyphs">-0.71</text>
<text x="704.30" y="291.61" font-size="13.33" fill="#000" textLength="28.75" lengthAdjust="spacingAndGlyphs">-0.04</text>
<text x="763.70" y="291.61" font-size="13.33" fill="#000" textLength="28.75" lengthAdjust="spacingAndGlyphs">-0.18</text>
<text x="822.90" y="291.61" font-size="13.33" fill="#000" textLength="23.61" lengthAdjust="spacingAndGlyphs">0.74</text>
<text x="881.60" y="291.61" font-size="13.33" fill="#000" textLength="27.50" lengthAdjust="spacingAndGlyphs">Dark</text>
<line x1="881.80" y1="294.81" x2="908.60" y2="294.81" stroke="#000" stroke-width="1"/>
<line x1="160.00" y1="296.58" x2="967.00" y2="296.58" stroke="#262626" stroke-width="1.3"/>
<circle cx="169.7" cy="306.18" r="7" fill="url(#chk)"/>
<path d="M166.2 305.98 L168.8 309.38 L173.2 301.38" fill="none" stroke="#FFFFFF" stroke-width="1.6" stroke-linejoin="round" stroke-linecap="round"/>
<rect x="180.40" y="297.88" width="43.50" height="16.20" fill="#D4D4D4"/>
<rect x="181.10" y="298.48" width="41.80" height="15.00" fill="#2B2B2D"/>
<text x="228.30" y="310.38" font-size="12.3" fill="#000" textLength="14.00" lengthAdjust="spacingAndGlyphs">4#</text>
<text x="242.60" y="310.38" font-size="13.2" fill="#000" textLength="39.00" lengthAdjust="spacingAndGlyphs">Sample</text>
<text x="287.60" y="310.38" font-size="13.33" fill="#000" textLength="103.64" lengthAdjust="spacingAndGlyphs">2020/7/25 3:36:41</text>
<text x="397.80" y="310.38" font-size="13.33" fill="#000" textLength="48.30" lengthAdjust="spacingAndGlyphs">D65/10°</text>
<text x="466.80" y="310.38" font-size="13.33" fill="#000" textLength="30.57" lengthAdjust="spacingAndGlyphs">17.57</text>
<text x="526.60" y="310.38" font-size="13.33" fill="#000" textLength="28.75" lengthAdjust="spacingAndGlyphs">-0.15</text>
<text x="585.70" y="310.38" font-size="13.33" fill="#000" textLength="28.75" lengthAdjust="spacingAndGlyphs">-1.44</text>
<text x="644.90" y="310.38" font-size="13.33" fill="#000" textLength="28.75" lengthAdjust="spacingAndGlyphs">-0.81</text>
<text x="704.30" y="310.38" font-size="13.33" fill="#000" textLength="23.61" lengthAdjust="spacingAndGlyphs">0.03</text>
<text x="763.70" y="310.38" font-size="13.33" fill="#000" textLength="28.75" lengthAdjust="spacingAndGlyphs">-0.23</text>
<text x="822.90" y="310.38" font-size="13.33" fill="#000" textLength="23.61" lengthAdjust="spacingAndGlyphs">0.84</text>
<text x="881.60" y="310.38" font-size="13.33" fill="#000" textLength="27.50" lengthAdjust="spacingAndGlyphs">Dark</text>
<line x1="881.80" y1="313.58" x2="908.60" y2="313.58" stroke="#000" stroke-width="1"/>
<line x1="160.00" y1="315.35" x2="967.00" y2="315.35" stroke="#262626" stroke-width="1.3"/>
<circle cx="169.7" cy="324.95" r="7" fill="url(#chk)"/>
<path d="M166.2 324.75 L168.8 328.15 L173.2 320.15" fill="none" stroke="#FFFFFF" stroke-width="1.6" stroke-linejoin="round" stroke-linecap="round"/>
<rect x="180.40" y="316.65" width="43.50" height="16.20" fill="#D4D4D4"/>
<rect x="181.10" y="317.25" width="41.80" height="15.00" fill="#2B2B2D"/>
<text x="228.30" y="329.15" font-size="12.3" fill="#000" textLength="14.00" lengthAdjust="spacingAndGlyphs">5#</text>
<text x="242.60" y="329.15" font-size="13.2" fill="#000" textLength="39.00" lengthAdjust="spacingAndGlyphs">Sample</text>
<text x="287.60" y="329.15" font-size="13.33" fill="#000" textLength="103.64" lengthAdjust="spacingAndGlyphs">2020/7/25 3:37:41</text>
<text x="397.80" y="329.15" font-size="13.33" fill="#000" textLength="48.30" lengthAdjust="spacingAndGlyphs">D65/10°</text>
<text x="466.80" y="329.15" font-size="13.33" fill="#000" textLength="30.57" lengthAdjust="spacingAndGlyphs">17.68</text>
<text x="526.60" y="329.15" font-size="13.33" fill="#000" textLength="28.75" lengthAdjust="spacingAndGlyphs">-0.17</text>
<text x="585.70" y="329.15" font-size="13.33" fill="#000" textLength="28.75" lengthAdjust="spacingAndGlyphs">-1.39</text>
<text x="644.90" y="329.15" font-size="13.33" fill="#000" textLength="28.75" lengthAdjust="spacingAndGlyphs">-0.69</text>
<text x="704.30" y="329.15" font-size="13.33" fill="#000" textLength="23.61" lengthAdjust="spacingAndGlyphs">0.00</text>
<text x="763.70" y="329.15" font-size="13.33" fill="#000" textLength="28.75" lengthAdjust="spacingAndGlyphs">-0.18</text>
<text x="822.90" y="329.15" font-size="13.33" fill="#000" textLength="23.61" lengthAdjust="spacingAndGlyphs">0.71</text>
<text x="881.60" y="329.15" font-size="13.33" fill="#000" textLength="27.50" lengthAdjust="spacingAndGlyphs">Dark</text>
<line x1="881.80" y1="332.35" x2="908.60" y2="332.35" stroke="#000" stroke-width="1"/>
<line x1="160.00" y1="334.12" x2="967.00" y2="334.12" stroke="#262626" stroke-width="1.3"/>
<circle cx="169.7" cy="343.72" r="7" fill="url(#chk)"/>
<path d="M166.2 343.52 L168.8 346.92 L173.2 338.92" fill="none" stroke="#FFFFFF" stroke-width="1.6" stroke-linejoin="round" stroke-linecap="round"/>
<rect x="180.40" y="335.42" width="43.50" height="16.20" fill="#D4D4D4"/>
<rect x="181.10" y="336.02" width="41.80" height="15.00" fill="#2B2B2D"/>
<text x="228.30" y="347.92" font-size="12.3" fill="#000" textLength="14.00" lengthAdjust="spacingAndGlyphs">6#</text>
<text x="242.60" y="347.92" font-size="13.2" fill="#000" textLength="39.00" lengthAdjust="spacingAndGlyphs">Sample</text>
<text x="287.60" y="347.92" font-size="13.33" fill="#000" textLength="103.64" lengthAdjust="spacingAndGlyphs">2020/7/25 3:38:50</text>
<text x="397.80" y="347.92" font-size="13.33" fill="#000" textLength="48.30" lengthAdjust="spacingAndGlyphs">D65/10°</text>
<text x="466.80" y="347.92" font-size="13.33" fill="#000" textLength="30.57" lengthAdjust="spacingAndGlyphs">17.93</text>
<text x="526.60" y="347.92" font-size="13.33" fill="#000" textLength="28.75" lengthAdjust="spacingAndGlyphs">-0.21</text>
<text x="585.70" y="347.92" font-size="13.33" fill="#000" textLength="28.75" lengthAdjust="spacingAndGlyphs">-1.33</text>
<text x="644.90" y="347.92" font-size="13.33" fill="#000" textLength="28.75" lengthAdjust="spacingAndGlyphs">-0.45</text>
<text x="704.30" y="347.92" font-size="13.33" fill="#000" textLength="28.75" lengthAdjust="spacingAndGlyphs">-0.03</text>
<text x="763.70" y="347.92" font-size="13.33" fill="#000" textLength="28.75" lengthAdjust="spacingAndGlyphs">-0.12</text>
<text x="822.90" y="347.92" font-size="13.33" fill="#000" textLength="23.61" lengthAdjust="spacingAndGlyphs">0.47</text>
<text x="881.60" y="347.92" font-size="13.33" fill="#000" textLength="37.00" lengthAdjust="spacingAndGlyphs">NONE</text>
<line x1="160.00" y1="352.89" x2="967.00" y2="352.89" stroke="#262626" stroke-width="1.3"/>
<circle cx="169.7" cy="362.49" r="7" fill="url(#chk)"/>
<path d="M166.2 362.29 L168.8 365.69 L173.2 357.69" fill="none" stroke="#FFFFFF" stroke-width="1.6" stroke-linejoin="round" stroke-linecap="round"/>
<rect x="180.40" y="354.19" width="43.50" height="16.20" fill="#D4D4D4"/>
<rect x="181.10" y="354.79" width="41.80" height="15.00" fill="#2B2B2D"/>
<text x="228.30" y="366.69" font-size="12.3" fill="#000" textLength="14.00" lengthAdjust="spacingAndGlyphs">7#</text>
<text x="242.60" y="366.69" font-size="13.2" fill="#000" textLength="39.00" lengthAdjust="spacingAndGlyphs">Sample</text>
<text x="287.60" y="366.69" font-size="13.33" fill="#000" textLength="103.64" lengthAdjust="spacingAndGlyphs">2020/7/25 3:39:24</text>
<text x="397.80" y="366.69" font-size="13.33" fill="#000" textLength="48.30" lengthAdjust="spacingAndGlyphs">D65/10°</text>
<text x="466.80" y="366.69" font-size="13.33" fill="#000" textLength="30.57" lengthAdjust="spacingAndGlyphs">17.98</text>
<text x="526.60" y="366.69" font-size="13.33" fill="#000" textLength="28.75" lengthAdjust="spacingAndGlyphs">-0.21</text>
<text x="585.70" y="366.69" font-size="13.33" fill="#000" textLength="28.75" lengthAdjust="spacingAndGlyphs">-1.36</text>
<text x="644.90" y="366.69" font-size="13.33" fill="#000" textLength="28.75" lengthAdjust="spacingAndGlyphs">-0.40</text>
<text x="704.30" y="366.69" font-size="13.33" fill="#000" textLength="28.75" lengthAdjust="spacingAndGlyphs">-0.03</text>
<text x="763.70" y="366.69" font-size="13.33" fill="#000" textLength="28.75" lengthAdjust="spacingAndGlyphs">-0.15</text>
<text x="822.90" y="366.69" font-size="13.33" fill="#000" textLength="23.61" lengthAdjust="spacingAndGlyphs">0.43</text>
<text x="881.60" y="366.69" font-size="13.33" fill="#000" textLength="37.00" lengthAdjust="spacingAndGlyphs">NONE</text>
<line x1="160.00" y1="371.66" x2="967.00" y2="371.66" stroke="#262626" stroke-width="1.3"/>
<circle cx="169.7" cy="381.26" r="7" fill="url(#chk)"/>
<path d="M166.2 381.06 L168.8 384.46 L173.2 376.46" fill="none" stroke="#FFFFFF" stroke-width="1.6" stroke-linejoin="round" stroke-linecap="round"/>
<rect x="180.40" y="372.96" width="43.50" height="16.20" fill="#D4D4D4"/>
<rect x="181.10" y="373.56" width="41.80" height="15.00" fill="#2B2B2D"/>
<text x="228.30" y="385.46" font-size="12.3" fill="#000" textLength="14.00" lengthAdjust="spacingAndGlyphs">8#</text>
<text x="242.60" y="385.46" font-size="13.2" fill="#000" textLength="39.00" lengthAdjust="spacingAndGlyphs">Sample</text>
<text x="287.60" y="385.46" font-size="13.33" fill="#000" textLength="103.64" lengthAdjust="spacingAndGlyphs">2020/7/25 3:40:34</text>
<text x="397.80" y="385.46" font-size="13.33" fill="#000" textLength="48.30" lengthAdjust="spacingAndGlyphs">D65/10°</text>
<text x="466.80" y="385.46" font-size="13.33" fill="#000" textLength="30.57" lengthAdjust="spacingAndGlyphs">18.04</text>
<text x="526.60" y="385.46" font-size="13.33" fill="#000" textLength="28.75" lengthAdjust="spacingAndGlyphs">-0.17</text>
<text x="585.70" y="385.46" font-size="13.33" fill="#000" textLength="28.75" lengthAdjust="spacingAndGlyphs">-1.42</text>
<text x="644.90" y="385.46" font-size="13.33" fill="#000" textLength="28.75" lengthAdjust="spacingAndGlyphs">-0.33</text>
<text x="704.30" y="385.46" font-size="13.33" fill="#000" textLength="23.61" lengthAdjust="spacingAndGlyphs">0.01</text>
<text x="763.70" y="385.46" font-size="13.33" fill="#000" textLength="28.75" lengthAdjust="spacingAndGlyphs">-0.21</text>
<text x="822.90" y="385.46" font-size="13.33" fill="#000" textLength="23.61" lengthAdjust="spacingAndGlyphs">0.39</text>
<text x="881.60" y="385.46" font-size="13.33" fill="#000" textLength="37.00" lengthAdjust="spacingAndGlyphs">NONE</text>
<line x1="160.00" y1="390.43" x2="967.00" y2="390.43" stroke="#262626" stroke-width="1.3"/>
<circle cx="169.7" cy="400.03" r="7" fill="url(#chk)"/>
<path d="M166.2 399.83 L168.8 403.23 L173.2 395.23" fill="none" stroke="#FFFFFF" stroke-width="1.6" stroke-linejoin="round" stroke-linecap="round"/>
<rect x="180.40" y="391.73" width="43.50" height="16.20" fill="#D4D4D4"/>
<rect x="181.10" y="392.33" width="41.80" height="15.00" fill="#2B2B2D"/>
<text x="228.30" y="404.23" font-size="12.3" fill="#000" textLength="14.00" lengthAdjust="spacingAndGlyphs">9#</text>
<text x="242.60" y="404.23" font-size="13.2" fill="#000" textLength="39.00" lengthAdjust="spacingAndGlyphs">Sample</text>
<text x="287.60" y="404.23" font-size="13.33" fill="#000" textLength="103.64" lengthAdjust="spacingAndGlyphs">2020/7/25 3:41:34</text>
<text x="397.80" y="404.23" font-size="13.33" fill="#000" textLength="48.30" lengthAdjust="spacingAndGlyphs">D65/10°</text>
<text x="466.80" y="404.23" font-size="13.33" fill="#000" textLength="30.57" lengthAdjust="spacingAndGlyphs">17.87</text>
<text x="526.60" y="404.23" font-size="13.33" fill="#000" textLength="28.75" lengthAdjust="spacingAndGlyphs">-0.18</text>
<text x="585.70" y="404.23" font-size="13.33" fill="#000" textLength="28.75" lengthAdjust="spacingAndGlyphs">-1.40</text>
<text x="644.90" y="404.23" font-size="13.33" fill="#000" textLength="28.75" lengthAdjust="spacingAndGlyphs">-0.51</text>
<text x="704.30" y="404.23" font-size="13.33" fill="#000" textLength="28.75" lengthAdjust="spacingAndGlyphs">-0.01</text>
<text x="763.70" y="404.23" font-size="13.33" fill="#000" textLength="28.75" lengthAdjust="spacingAndGlyphs">-0.19</text>
<text x="822.90" y="404.23" font-size="13.33" fill="#000" textLength="23.61" lengthAdjust="spacingAndGlyphs">0.54</text>
<text x="881.60" y="404.23" font-size="13.33" fill="#000" textLength="27.50" lengthAdjust="spacingAndGlyphs">Dark</text>
<line x1="881.80" y1="407.43" x2="908.60" y2="407.43" stroke="#000" stroke-width="1"/>
<line x1="160.00" y1="409.20" x2="967.00" y2="409.20" stroke="#262626" stroke-width="1.3"/>
<circle cx="169.7" cy="418.80" r="7" fill="url(#chk)"/>
<path d="M166.2 418.60 L168.8 422.00 L173.2 414.00" fill="none" stroke="#FFFFFF" stroke-width="1.6" stroke-linejoin="round" stroke-linecap="round"/>
<rect x="180.40" y="410.50" width="43.50" height="16.20" fill="#D4D4D4"/>
<rect x="181.10" y="411.10" width="41.80" height="15.00" fill="#2B2B2D"/>
<text x="228.30" y="423.00" font-size="12.3" fill="#000" textLength="21.00" lengthAdjust="spacingAndGlyphs">10#</text>
<text x="249.60" y="423.00" font-size="13.2" fill="#000" textLength="39.00" lengthAdjust="spacingAndGlyphs" clip-path="url(#namecl)">Sample</text>
<text x="287.60" y="423.00" font-size="13.33" fill="#000" textLength="103.64" lengthAdjust="spacingAndGlyphs">2020/7/25 3:42:32</text>
<text x="397.80" y="423.00" font-size="13.33" fill="#000" textLength="48.30" lengthAdjust="spacingAndGlyphs">D65/10°</text>
<text x="466.80" y="423.00" font-size="13.33" fill="#000" textLength="30.57" lengthAdjust="spacingAndGlyphs">18.07</text>
<text x="526.60" y="423.00" font-size="13.33" fill="#000" textLength="28.75" lengthAdjust="spacingAndGlyphs">-0.12</text>
<text x="585.70" y="423.00" font-size="13.33" fill="#000" textLength="28.75" lengthAdjust="spacingAndGlyphs">-1.28</text>
<text x="644.90" y="423.00" font-size="13.33" fill="#000" textLength="28.75" lengthAdjust="spacingAndGlyphs">-0.30</text>
<text x="704.30" y="423.00" font-size="13.33" fill="#000" textLength="23.61" lengthAdjust="spacingAndGlyphs">0.05</text>
<text x="763.70" y="423.00" font-size="13.33" fill="#000" textLength="28.75" lengthAdjust="spacingAndGlyphs">-0.07</text>
<text x="822.90" y="423.00" font-size="13.33" fill="#000" textLength="23.61" lengthAdjust="spacingAndGlyphs">0.32</text>
<text x="881.60" y="423.00" font-size="13.33" fill="#000" textLength="37.00" lengthAdjust="spacingAndGlyphs">NONE</text>
<line x1="160.00" y1="427.97" x2="967.00" y2="427.97" stroke="#262626" stroke-width="1.3"/>
<rect x="283.40" y="221.50" width="1.20" height="206.47" fill="#222"/>
<line x1="179.40" y1="221.50" x2="179.40" y2="427.97" stroke="#222" stroke-width="1.2"/>
<line x1="224.60" y1="221.50" x2="224.60" y2="427.97" stroke="#222" stroke-width="1.2"/>
<line x1="284.00" y1="221.50" x2="284.00" y2="427.97" stroke="#222" stroke-width="1.2"/>
<line x1="393.40" y1="221.50" x2="393.40" y2="427.97" stroke="#222" stroke-width="1.2"/>
<line x1="462.40" y1="221.50" x2="462.40" y2="427.97" stroke="#222" stroke-width="1.2"/>
<line x1="522.20" y1="221.50" x2="522.20" y2="427.97" stroke="#222" stroke-width="1.2"/>
<line x1="581.30" y1="221.50" x2="581.30" y2="427.97" stroke="#222" stroke-width="1.2"/>
<line x1="640.50" y1="221.50" x2="640.50" y2="427.97" stroke="#222" stroke-width="1.2"/>
<line x1="699.90" y1="221.50" x2="699.90" y2="427.97" stroke="#222" stroke-width="1.2"/>
<line x1="759.30" y1="221.50" x2="759.30" y2="427.97" stroke="#222" stroke-width="1.2"/>
<line x1="818.50" y1="221.50" x2="818.50" y2="427.97" stroke="#222" stroke-width="1.2"/>
<line x1="877.50" y1="221.50" x2="877.50" y2="427.97" stroke="#222" stroke-width="1.2"/>
<line x1="936.80" y1="221.50" x2="936.80" y2="427.97" stroke="#222" stroke-width="1.2"/>
<text x="186.60" y="214.50" font-size="15.2" fill="#000" textLength="34.50" lengthAdjust="spacingAndGlyphs">Simu</text>
<line x1="186.10" y1="217.70" x2="221.60" y2="217.70" stroke="#303030" stroke-width="1.3"/>
<text x="233.20" y="214.50" font-size="15.2" fill="#000" textLength="39.50" lengthAdjust="spacingAndGlyphs">Name</text>
<line x1="232.70" y1="217.70" x2="273.20" y2="217.70" stroke="#303030" stroke-width="1.3"/>
<text x="289.60" y="214.50" font-size="15.2" fill="#000" textLength="64.00" lengthAdjust="spacingAndGlyphs">Date time</text>
<line x1="289.10" y1="217.70" x2="354.10" y2="217.70" stroke="#303030" stroke-width="1.3"/>
<text x="397.80" y="214.50" font-size="15.2" fill="#000" textLength="61.60" lengthAdjust="spacingAndGlyphs">Observer</text>
<line x1="397.30" y1="217.70" x2="459.90" y2="217.70" stroke="#303030" stroke-width="1.3"/>
<text x="466.80" y="214.90" font-size="12.6" fill="#000" textLength="11.80" lengthAdjust="spacingAndGlyphs">L*</text>
<text x="527.60" y="214.90" font-size="12.6" fill="#000" textLength="12.20" lengthAdjust="spacingAndGlyphs">a*</text>
<text x="586.60" y="214.90" font-size="12.6" fill="#000" textLength="12.50" lengthAdjust="spacingAndGlyphs">b*</text>
<text x="646.20" y="214.90" font-size="12.6" fill="#000" textLength="20.00" lengthAdjust="spacingAndGlyphs">ΔL*</text>
<text x="705.50" y="214.90" font-size="12.6" fill="#000" textLength="21.00" lengthAdjust="spacingAndGlyphs">Δa*</text>
<text x="765.00" y="214.90" font-size="12.6" fill="#000" textLength="21.50" lengthAdjust="spacingAndGlyphs">Δb*</text>
<text x="824.40" y="214.90" font-size="12.6" fill="#000" textLength="34.50" lengthAdjust="spacingAndGlyphs">ΔE*ab</text>
<text x="878.40" y="213.30" font-size="13.6" fill="#000" textLength="58.50" lengthAdjust="spacingAndGlyphs">Color bias</text>
<line x1="878.40" y1="216.60" x2="937.00" y2="216.60" stroke="#303030" stroke-width="1.2"/>
<rect x="153.6" y="198.9" width="813.8" height="323.6" fill="none" stroke="#7B8CA0" stroke-width="1"/>
<rect x="968.50" y="91.80" width="309.50" height="441.00" fill="#FFFFFF"/>
<circle cx="979.3" cy="103.3" r="8.6" fill="none" stroke="#3A3A3A" stroke-width="1.3"/>
<path d="M975.6 105.6 L979.3 101.6 L983 105.6" fill="none" stroke="#1A1A1A" stroke-width="2"/>
<text x="993.50" y="108.30" font-size="13.8" fill="#000" textLength="130.50" lengthAdjust="spacingAndGlyphs">Chromatic aberration</text>
<rect x="975.6" y="119.8" width="295" height="402" fill="#FFFFFF" stroke="#A8A8A8" stroke-width="1.2"/>
<text x="1072.20" y="131.90" font-size="11.6" fill="#000" font-weight="bold" textLength="102.50" lengthAdjust="spacingAndGlyphs">CIE LAB, D65/10°</text>
<text x="982.20" y="163.80" font-size="13.6" fill="#000" textLength="53.80" lengthAdjust="spacingAndGlyphs">Samples</text>
<text x="1047.20" y="163.80" font-size="13.6" fill="#000" textLength="15.50" lengthAdjust="spacingAndGlyphs">0#</text>
<text x="1066.80" y="163.80" font-size="13.6" fill="#000" textLength="53.80" lengthAdjust="spacingAndGlyphs">Samples</text>
<rect x="981.00" y="182.30" width="284.20" height="17.10" fill="#008B8B"/>
<rect x="981.00" y="199.40" width="284.20" height="50.60" fill="#ADD8E6"/>
<line x1="981.00" y1="216.30" x2="1265.20" y2="216.30" stroke="#B9DDE9" stroke-width="1"/>
<line x1="981.00" y1="233.20" x2="1265.20" y2="233.20" stroke="#B9DDE9" stroke-width="1"/>
<text x="1032.60" y="195.20" font-size="13.4" fill="#000" textLength="54.60" lengthAdjust="spacingAndGlyphs">Samples</text>
<line x1="1032.60" y1="198.20" x2="1087.20" y2="198.20" stroke="#0A2A2A" stroke-width="1.3"/>
<text x="1101.60" y="195.20" font-size="13.4" fill="#000" textLength="35.50" lengthAdjust="spacingAndGlyphs">Least</text>
<line x1="1101.60" y1="198.20" x2="1137.10" y2="198.20" stroke="#0A2A2A" stroke-width="1.3"/>
<text x="1163.80" y="195.20" font-size="13.4" fill="#000" textLength="30.50" lengthAdjust="spacingAndGlyphs">MAX</text>
<line x1="1163.80" y1="198.20" x2="1194.30" y2="198.20" stroke="#0A2A2A" stroke-width="1.3"/>
<text x="1217.60" y="195.20" font-size="13.4" fill="#000" textLength="40.00" lengthAdjust="spacingAndGlyphs">Scope</text>
<line x1="1217.60" y1="198.20" x2="1257.60" y2="198.20" stroke="#0A2A2A" stroke-width="1.3"/>
<text x="982.00" y="212.60" font-size="12.8" fill="#000" font-weight="bold">L*</text>
<text x="1043.60" y="212.60" font-size="12.9" fill="#1A1A1A" textLength="30.76" lengthAdjust="spacingAndGlyphs">18.37</text>
<text x="1104.90" y="212.60" font-size="12.9" fill="#1A1A1A" textLength="37.49" lengthAdjust="spacingAndGlyphs">17.567</text>
<text x="1166.20" y="212.60" font-size="12.9" fill="#1A1A1A" textLength="37.49" lengthAdjust="spacingAndGlyphs">18.418</text>
<text x="1226.80" y="212.60" font-size="12.9" fill="#1A1A1A" textLength="30.76" lengthAdjust="spacingAndGlyphs">0.851</text>
<text x="982.00" y="229.60" font-size="12.8" fill="#000" font-weight="bold">a*</text>
<text x="1043.60" y="229.60" font-size="12.9" fill="#1A1A1A" textLength="29.01" lengthAdjust="spacingAndGlyphs">-0.18</text>
<text x="1104.90" y="229.60" font-size="12.9" fill="#1A1A1A" textLength="35.74" lengthAdjust="spacingAndGlyphs">-0.221</text>
<text x="1166.20" y="229.60" font-size="12.9" fill="#1A1A1A" textLength="35.74" lengthAdjust="spacingAndGlyphs">-0.123</text>
<text x="1226.80" y="229.60" font-size="12.9" fill="#1A1A1A" textLength="30.76" lengthAdjust="spacingAndGlyphs">0.098</text>
<text x="982.00" y="246.60" font-size="12.8" fill="#000" font-weight="bold">b*</text>
<text x="1043.60" y="246.60" font-size="12.9" fill="#1A1A1A" textLength="29.01" lengthAdjust="spacingAndGlyphs">-1.21</text>
<text x="1104.90" y="246.60" font-size="12.9" fill="#1A1A1A" textLength="35.74" lengthAdjust="spacingAndGlyphs">-1.439</text>
<text x="1166.20" y="246.60" font-size="12.9" fill="#1A1A1A" textLength="35.74" lengthAdjust="spacingAndGlyphs">-1.213</text>
<text x="1226.80" y="246.60" font-size="12.9" fill="#1A1A1A" textLength="30.76" lengthAdjust="spacingAndGlyphs">0.226</text>
<rect x="981.00" y="265.40" width="284.20" height="16.90" fill="#008B8B"/>
<rect x="981.00" y="282.30" width="284.20" height="68.40" fill="#ADD8E6"/>
<line x1="981.00" y1="299.40" x2="1265.20" y2="299.40" stroke="#B9DDE9" stroke-width="1"/>
<line x1="981.00" y1="316.50" x2="1265.20" y2="316.50" stroke="#B9DDE9" stroke-width="1"/>
<line x1="981.00" y1="333.60" x2="1265.20" y2="333.60" stroke="#B9DDE9" stroke-width="1"/>
<text x="1036.00" y="278.40" font-size="13.4" fill="#000" textLength="33.70" lengthAdjust="spacingAndGlyphs">Least</text>
<line x1="1036.00" y1="281.30" x2="1069.70" y2="281.30" stroke="#0A2A2A" stroke-width="1.3"/>
<text x="1100.80" y="278.40" font-size="13.4" fill="#000" textLength="30.00" lengthAdjust="spacingAndGlyphs">MAX</text>
<line x1="1100.80" y1="281.30" x2="1130.80" y2="281.30" stroke="#0A2A2A" stroke-width="1.3"/>
<text x="1159.00" y="278.40" font-size="13.4" fill="#000" textLength="39.50" lengthAdjust="spacingAndGlyphs">Scope</text>
<line x1="1159.00" y1="281.30" x2="1198.50" y2="281.30" stroke="#0A2A2A" stroke-width="1.3"/>
<text x="1210.50" y="278.40" font-size="13.4" fill="#000" textLength="51.30" lengthAdjust="spacingAndGlyphs">Average</text>
<line x1="1210.50" y1="281.30" x2="1261.80" y2="281.30" stroke="#0A2A2A" stroke-width="1.3"/>
<text x="982.00" y="296.00" font-size="12.8" fill="#000" font-weight="bold">ΔL*</text>
<text x="1043.40" y="296.00" font-size="12.9" fill="#1A1A1A" textLength="36.34" lengthAdjust="spacingAndGlyphs">-0.807</text>
<text x="1104.50" y="296.00" font-size="12.9" fill="#1A1A1A" textLength="31.36" lengthAdjust="spacingAndGlyphs">0.044</text>
<text x="1165.60" y="296.00" font-size="12.9" fill="#1A1A1A" textLength="31.36" lengthAdjust="spacingAndGlyphs">0.851</text>
<text x="1227.00" y="296.00" font-size="12.9" fill="#1A1A1A" textLength="36.34" lengthAdjust="spacingAndGlyphs">-0.484</text>
<text x="982.00" y="313.10" font-size="12.8" fill="#000" font-weight="bold">Δa*</text>
<text x="1043.40" y="313.10" font-size="12.9" fill="#1A1A1A" textLength="36.34" lengthAdjust="spacingAndGlyphs">-0.046</text>
<text x="1104.50" y="313.10" font-size="12.9" fill="#1A1A1A" textLength="31.36" lengthAdjust="spacingAndGlyphs">0.052</text>
<text x="1165.60" y="313.10" font-size="12.9" fill="#1A1A1A" textLength="31.36" lengthAdjust="spacingAndGlyphs">0.098</text>
<text x="1227.00" y="313.10" font-size="12.9" fill="#1A1A1A" textLength="36.34" lengthAdjust="spacingAndGlyphs">-0.011</text>
<text x="982.00" y="330.20" font-size="12.8" fill="#000" font-weight="bold">Δb*</text>
<text x="1043.40" y="330.20" font-size="12.9" fill="#1A1A1A" textLength="36.34" lengthAdjust="spacingAndGlyphs">-0.228</text>
<text x="1104.50" y="330.20" font-size="12.9" fill="#1A1A1A" textLength="36.34" lengthAdjust="spacingAndGlyphs">-0.003</text>
<text x="1165.60" y="330.20" font-size="12.9" fill="#1A1A1A" textLength="31.36" lengthAdjust="spacingAndGlyphs">0.226</text>
<text x="1227.00" y="330.20" font-size="12.9" fill="#1A1A1A" textLength="36.34" lengthAdjust="spacingAndGlyphs">-0.147</text>
<text x="982.00" y="347.30" font-size="12.8" fill="#000" font-weight="bold">ΔE*ab</text>
<text x="1043.40" y="347.30" font-size="12.9" fill="#1A1A1A" textLength="31.36" lengthAdjust="spacingAndGlyphs">0.052</text>
<text x="1104.50" y="347.30" font-size="12.9" fill="#1A1A1A" textLength="31.36" lengthAdjust="spacingAndGlyphs">0.839</text>
<text x="1165.60" y="347.30" font-size="12.9" fill="#1A1A1A" textLength="31.36" lengthAdjust="spacingAndGlyphs">0.787</text>
<text x="1227.00" y="347.30" font-size="12.9" fill="#1A1A1A" textLength="31.36" lengthAdjust="spacingAndGlyphs">0.517</text>
<rect x="147.00" y="522.90" width="821.50" height="210.00" fill="#F0F0F0"/>
<rect x="968.50" y="522.90" width="309.50" height="5.50" fill="#FFFFFF"/>
<rect x="157" y="533.1" width="268.6" height="194.6" fill="#FFFFFF" stroke="#0E8585" stroke-width="2"/>
<rect x="426.60" y="528.30" width="3.30" height="204.00" fill="#F8F8F8"/>
<rect x="429.90" y="528.30" width="5.50" height="204.00" fill="#EDEFF2"/>
<line x1="204.80" y1="549.50" x2="204.80" y2="684.50" stroke="#EFEFEF" stroke-width="1"/>
<line x1="234.90" y1="549.50" x2="234.90" y2="684.50" stroke="#EFEFEF" stroke-width="1"/>
<line x1="265.00" y1="549.50" x2="265.00" y2="684.50" stroke="#EFEFEF" stroke-width="1"/>
<line x1="295.00" y1="549.50" x2="295.00" y2="684.50" stroke="#EFEFEF" stroke-width="1"/>
<line x1="324.90" y1="549.50" x2="324.90" y2="684.50" stroke="#EFEFEF" stroke-width="1"/>
<line x1="198.80" y1="556.30" x2="331.50" y2="556.30" stroke="#EFEFEF" stroke-width="1"/>
<line x1="198.80" y1="586.70" x2="331.50" y2="586.70" stroke="#EFEFEF" stroke-width="1"/>
<line x1="198.80" y1="617.00" x2="331.50" y2="617.00" stroke="#EFEFEF" stroke-width="1"/>
<line x1="198.80" y1="647.80" x2="331.50" y2="647.80" stroke="#EFEFEF" stroke-width="1"/>
<line x1="198.80" y1="678.10" x2="331.50" y2="678.10" stroke="#EFEFEF" stroke-width="1"/>
<line x1="198.80" y1="617.00" x2="331.50" y2="617.00" stroke="#222" stroke-width="1.5"/>
<line x1="265.00" y1="549.50" x2="265.00" y2="684.60" stroke="#222" stroke-width="1.5"/>
<text x="194.40" y="559.50" font-size="9.6" fill="#9A9A9A" text-anchor="end">1</text>
<text x="194.40" y="589.90" font-size="9.6" fill="#9A9A9A" text-anchor="end">0.5</text>
<text x="194.40" y="620.20" font-size="9.6" fill="#9A9A9A" text-anchor="end">0</text>
<text x="194.40" y="651.00" font-size="9.6" fill="#9A9A9A" text-anchor="end">-0.5</text>
<text x="194.40" y="681.30" font-size="9.6" fill="#9A9A9A" text-anchor="end">-1</text>
<text x="204.80" y="699.60" font-size="9.6" fill="#9A9A9A" text-anchor="middle">-1</text>
<text x="234.90" y="699.60" font-size="9.6" fill="#9A9A9A" text-anchor="middle">-0.5</text>
<text x="265.00" y="699.60" font-size="9.6" fill="#9A9A9A" text-anchor="middle">0</text>
<text x="295.00" y="699.60" font-size="9.6" fill="#9A9A9A" text-anchor="middle">0.5</text>
<text x="324.90" y="699.60" font-size="9.6" fill="#9A9A9A" text-anchor="middle">1</text>
<text x="264.80" y="708.40" font-size="9.6" fill="#9A9A9A" text-anchor="middle">Δa*</text>
<text transform="translate(175.4,617.2) rotate(-90)" font-size="9.6" fill="#9A9A9A" text-anchor="middle">Δb*</text>
<circle cx="263.20" cy="617.00" r="4.2" fill="#808080"/>
<circle cx="263.80" cy="627.37" r="4.2" fill="#808080"/>
<circle cx="262.00" cy="623.71" r="4.2" fill="#808080"/>
<circle cx="262.60" cy="627.98" r="4.2" fill="#808080"/>
<circle cx="266.80" cy="631.03" r="4.2" fill="#808080"/>
<circle cx="265.00" cy="627.98" r="4.2" fill="#808080"/>
<circle cx="263.20" cy="624.32" r="4.2" fill="#808080"/>
<circle cx="263.20" cy="626.15" r="4.2" fill="#808080"/>
<circle cx="265.60" cy="629.81" r="4.2" fill="#808080"/>
<circle cx="264.40" cy="628.59" r="4.2" fill="#808080"/>
<circle cx="268.00" cy="621.27" r="4.2" fill="#808080"/>
<line x1="374.70" y1="553.60" x2="418.50" y2="553.60" stroke="#EFEFEF" stroke-width="1"/>
<line x1="374.70" y1="585.70" x2="418.50" y2="585.70" stroke="#EFEFEF" stroke-width="1"/>
<line x1="374.70" y1="617.30" x2="418.50" y2="617.30" stroke="#EFEFEF" stroke-width="1"/>
<line x1="374.70" y1="649.60" x2="418.50" y2="649.60" stroke="#EFEFEF" stroke-width="1"/>
<line x1="374.70" y1="681.70" x2="418.50" y2="681.70" stroke="#EFEFEF" stroke-width="1"/>
<line x1="396.60" y1="549.40" x2="396.60" y2="684.10" stroke="#5A5A5A" stroke-width="1.6"/>
<text x="370.90" y="556.80" font-size="9.6" fill="#9A9A9A" text-anchor="end">1</text>
<text x="370.90" y="588.90" font-size="9.6" fill="#9A9A9A" text-anchor="end">0.5</text>
<text x="370.90" y="620.50" font-size="9.6" fill="#9A9A9A" text-anchor="end">0</text>
<text x="370.90" y="652.80" font-size="9.6" fill="#9A9A9A" text-anchor="end">-0.5</text>
<text x="370.90" y="684.90" font-size="9.6" fill="#9A9A9A" text-anchor="end">-1</text>
<text transform="translate(349.6,617.3) rotate(-90)" font-size="9.6" fill="#9A9A9A" text-anchor="middle">ΔL*</text>
<circle cx="396.6" cy="614.73" r="4.2" fill="#808080"/>
<circle cx="396.6" cy="650.68" r="4.2" fill="#808080"/>
<circle cx="396.6" cy="659.03" r="4.2" fill="#808080"/>
<circle cx="396.6" cy="662.88" r="4.2" fill="#808080"/>
<circle cx="396.6" cy="669.30" r="4.2" fill="#808080"/>
<circle cx="396.6" cy="661.60" r="4.2" fill="#808080"/>
<circle cx="396.6" cy="646.19" r="4.2" fill="#808080"/>
<circle cx="396.6" cy="642.98" r="4.2" fill="#808080"/>
<circle cx="396.6" cy="638.49" r="4.2" fill="#808080"/>
<circle cx="396.6" cy="650.04" r="4.2" fill="#808080"/>
<circle cx="396.6" cy="636.56" r="4.2" fill="#808080"/>
<rect x="435.40" y="528.30" width="277.30" height="203.60" fill="#FFFFFF"/>
<rect x="712.70" y="528.30" width="6.30" height="203.60" fill="#EDEFF2"/>
<line x1="463.20" y1="553.00" x2="463.20" y2="703.00" stroke="#EFEFEF" stroke-width="1"/>
<text x="463.20" y="721.30" font-size="9.6" fill="#9A9A9A" text-anchor="middle">1</text>
<line x1="479.93" y1="553.00" x2="479.93" y2="703.00" stroke="#EFEFEF" stroke-width="1"/>
<text x="479.93" y="721.30" font-size="9.6" fill="#9A9A9A" text-anchor="middle">2</text>
<line x1="496.66" y1="553.00" x2="496.66" y2="703.00" stroke="#EFEFEF" stroke-width="1"/>
<text x="496.66" y="721.30" font-size="9.6" fill="#9A9A9A" text-anchor="middle">3</text>
<line x1="513.39" y1="553.00" x2="513.39" y2="703.00" stroke="#EFEFEF" stroke-width="1"/>
<text x="513.39" y="721.30" font-size="9.6" fill="#9A9A9A" text-anchor="middle">4</text>
<line x1="530.12" y1="553.00" x2="530.12" y2="703.00" stroke="#EFEFEF" stroke-width="1"/>
<text x="530.12" y="721.30" font-size="9.6" fill="#9A9A9A" text-anchor="middle">5</text>
<line x1="546.85" y1="553.00" x2="546.85" y2="703.00" stroke="#EFEFEF" stroke-width="1"/>
<text x="546.85" y="721.30" font-size="9.6" fill="#9A9A9A" text-anchor="middle">6</text>
<line x1="563.58" y1="553.00" x2="563.58" y2="703.00" stroke="#EFEFEF" stroke-width="1"/>
<text x="563.58" y="721.30" font-size="9.6" fill="#9A9A9A" text-anchor="middle">7</text>
<line x1="580.31" y1="553.00" x2="580.31" y2="703.00" stroke="#EFEFEF" stroke-width="1"/>
<text x="580.31" y="721.30" font-size="9.6" fill="#9A9A9A" text-anchor="middle">8</text>
<line x1="597.04" y1="553.00" x2="597.04" y2="703.00" stroke="#EFEFEF" stroke-width="1"/>
<text x="597.04" y="721.30" font-size="9.6" fill="#9A9A9A" text-anchor="middle">9</text>
<line x1="613.77" y1="553.00" x2="613.77" y2="703.00" stroke="#EFEFEF" stroke-width="1"/>
<text x="613.77" y="721.30" font-size="9.6" fill="#9A9A9A" text-anchor="middle">10</text>
<line x1="630.50" y1="553.00" x2="630.50" y2="703.00" stroke="#EFEFEF" stroke-width="1"/>
<text x="630.50" y="721.30" font-size="9.6" fill="#9A9A9A" text-anchor="middle">11</text>
<line x1="647.23" y1="553.00" x2="647.23" y2="703.00" stroke="#EFEFEF" stroke-width="1"/>
<text x="647.23" y="721.30" font-size="9.6" fill="#9A9A9A" text-anchor="middle">12</text>
<line x1="663.96" y1="553.00" x2="663.96" y2="703.00" stroke="#EFEFEF" stroke-width="1"/>
<text x="663.96" y="721.30" font-size="9.6" fill="#9A9A9A" text-anchor="middle">13</text>
<line x1="680.69" y1="553.00" x2="680.69" y2="703.00" stroke="#EFEFEF" stroke-width="1"/>
<text x="680.69" y="721.30" font-size="9.6" fill="#9A9A9A" text-anchor="middle">14</text>
<line x1="697.42" y1="553.00" x2="697.42" y2="703.00" stroke="#EFEFEF" stroke-width="1"/>
<text x="697.42" y="721.30" font-size="9.6" fill="#9A9A9A" text-anchor="middle">15</text>
<line x1="462.00" y1="557.60" x2="702.00" y2="557.60" stroke="#EFEFEF" stroke-width="1"/>
<text x="456.00" y="561.00" font-size="9.6" fill="#9A9A9A" text-anchor="end">1.0</text>
<line x1="462.00" y1="630.30" x2="702.00" y2="630.30" stroke="#EFEFEF" stroke-width="1"/>
<text x="456.00" y="633.70" font-size="9.6" fill="#9A9A9A" text-anchor="end">0.5</text>
<line x1="462.00" y1="703.00" x2="702.00" y2="703.00" stroke="#EFEFEF" stroke-width="1"/>
<text x="456.00" y="706.40" font-size="9.6" fill="#9A9A9A" text-anchor="end">0.0</text>
<circle cx="552.9" cy="544.4" r="5.6" fill="none" stroke="#2E8BDE" stroke-width="2"/>
<text x="565.00" y="548.60" font-size="11.5" fill="#333" textLength="34.00" lengthAdjust="spacingAndGlyphs">ΔE*ab</text>
<path d="M463.20 695.73 C469.06 670.28 471.09 646.86 479.93 623.03 C482.80 615.31 490.19 610.92 496.66 605.58 C501.90 601.25 507.90 599.46 513.39 595.40 C519.61 590.81 524.64 580.15 530.12 580.86 C536.36 581.68 542.23 592.33 546.85 599.77 C553.94 611.16 555.55 624.89 563.58 634.66 C567.26 639.14 574.45 638.44 580.31 640.48 C586.17 642.51 592.45 648.49 597.04 646.29 C604.16 642.89 608.71 622.94 613.77 624.48 C620.42 626.51 624.64 645.28 630.50 656.47" fill="none" stroke="#2E8BDE" stroke-width="2"/>
<circle cx="463.20" cy="695.73" r="3.6" fill="#FFFFFF" stroke="#2E8BDE" stroke-width="1.8"/>
<circle cx="479.93" cy="623.03" r="3.6" fill="#FFFFFF" stroke="#2E8BDE" stroke-width="1.8"/>
<circle cx="496.66" cy="605.58" r="3.6" fill="#FFFFFF" stroke="#2E8BDE" stroke-width="1.8"/>
<circle cx="513.39" cy="595.40" r="3.6" fill="#FFFFFF" stroke="#2E8BDE" stroke-width="1.8"/>
<circle cx="530.12" cy="580.86" r="3.6" fill="#FFFFFF" stroke="#2E8BDE" stroke-width="1.8"/>
<circle cx="546.85" cy="599.77" r="3.6" fill="#FFFFFF" stroke="#2E8BDE" stroke-width="1.8"/>
<circle cx="563.58" cy="634.66" r="3.6" fill="#FFFFFF" stroke="#2E8BDE" stroke-width="1.8"/>
<circle cx="580.31" cy="640.48" r="3.6" fill="#FFFFFF" stroke="#2E8BDE" stroke-width="1.8"/>
<circle cx="597.04" cy="646.29" r="3.6" fill="#FFFFFF" stroke="#2E8BDE" stroke-width="1.8"/>
<circle cx="613.77" cy="624.48" r="3.6" fill="#FFFFFF" stroke="#2E8BDE" stroke-width="1.8"/>
<circle cx="630.50" cy="656.47" r="3.6" fill="#FFFFFF" stroke="#2E8BDE" stroke-width="1.8"/>
<rect x="719.00" y="528.30" width="276.30" height="203.60" fill="#FFFFFF"/>
<rect x="995.30" y="528.30" width="5.80" height="203.60" fill="#EDEFF2"/>
<line x1="753.00" y1="541.60" x2="753.00" y2="672.80" stroke="#E6E6E6" stroke-width="1"/>
<text x="753.00" y="687.80" font-size="10.2" fill="#9A9A9A" text-anchor="middle">400</text>
<line x1="791.00" y1="541.60" x2="791.00" y2="672.80" stroke="#E6E6E6" stroke-width="1"/>
<text x="791.00" y="687.80" font-size="10.2" fill="#9A9A9A" text-anchor="middle">450</text>
<line x1="829.00" y1="541.60" x2="829.00" y2="672.80" stroke="#E6E6E6" stroke-width="1"/>
<text x="829.00" y="687.80" font-size="10.2" fill="#9A9A9A" text-anchor="middle">500</text>
<line x1="867.00" y1="541.60" x2="867.00" y2="672.80" stroke="#E6E6E6" stroke-width="1"/>
<text x="867.00" y="687.80" font-size="10.2" fill="#9A9A9A" text-anchor="middle">550</text>
<line x1="905.00" y1="541.60" x2="905.00" y2="672.80" stroke="#E6E6E6" stroke-width="1"/>
<text x="905.00" y="687.80" font-size="10.2" fill="#9A9A9A" text-anchor="middle">600</text>
<line x1="943.00" y1="541.60" x2="943.00" y2="672.80" stroke="#E6E6E6" stroke-width="1"/>
<text x="943.00" y="687.80" font-size="10.2" fill="#9A9A9A" text-anchor="middle">650</text>
<line x1="981.00" y1="541.60" x2="981.00" y2="672.80" stroke="#E6E6E6" stroke-width="1"/>
<text x="981.00" y="687.80" font-size="10.2" fill="#9A9A9A" text-anchor="middle">700</text>
<line x1="753.00" y1="672.80" x2="981.00" y2="672.80" stroke="#E6E6E6" stroke-width="1"/>
<text x="748.80" y="676.40" font-size="10.2" fill="#9A9A9A" text-anchor="end">0</text>
<line x1="753.00" y1="646.56" x2="981.00" y2="646.56" stroke="#E6E6E6" stroke-width="1"/>
<text x="748.80" y="650.16" font-size="10.2" fill="#9A9A9A" text-anchor="end">2</text>
<line x1="753.00" y1="620.32" x2="981.00" y2="620.32" stroke="#E6E6E6" stroke-width="1"/>
<text x="748.80" y="623.92" font-size="10.2" fill="#9A9A9A" text-anchor="end">4</text>
<line x1="753.00" y1="594.08" x2="981.00" y2="594.08" stroke="#E6E6E6" stroke-width="1"/>
<text x="748.80" y="597.68" font-size="10.2" fill="#9A9A9A" text-anchor="end">6</text>
<line x1="753.00" y1="567.84" x2="981.00" y2="567.84" stroke="#E6E6E6" stroke-width="1"/>
<text x="748.80" y="571.44" font-size="10.2" fill="#9A9A9A" text-anchor="end">8</text>
<line x1="753.00" y1="541.60" x2="981.00" y2="541.60" stroke="#E6E6E6" stroke-width="1"/>
<text x="748.80" y="545.20" font-size="10.2" fill="#9A9A9A" text-anchor="end">10</text>
<path d="M753 637 L790 638.2 L830 639.6 L870 640.8 L905 641.6 L945 642.2 L981 643 L981 672.8 L753 672.8 Z" fill="#7A9A94"/>
<path d="M753 635.2 L790 636.4 L830 637.6 L870 638.6 L905 639.2 L945 639.8 L981 640.3" fill="none" stroke="#4B45C4" stroke-width="1.6"/>
<path d="M753 637 L790 638.2 L830 639.6 L870 640.8 L905 641.6 L945 642.2 L981 643" fill="none" stroke="#B0B8C0" stroke-width="1"/>
<text x="872.30" y="698.70" font-size="10.2" fill="#9A9A9A" text-anchor="middle">λ (nm)</text>
<text transform="translate(735,606) rotate(-90)" font-size="9.6" fill="#9A9A9A" text-anchor="middle">R%</text>
<defs><linearGradient id="spec" x1="753" y1="0" x2="981" y2="0" gradientUnits="userSpaceOnUse"><stop offset="0" stop-color="#FF00FF"/><stop offset="0.22" stop-color="#FF00FF"/><stop offset="0.222" stop-color="#2020E0"/><stop offset="0.235" stop-color="#00FFFF"/><stop offset="0.32" stop-color="#00FFFF"/><stop offset="0.375" stop-color="#00FF00"/><stop offset="0.51" stop-color="#00FF00"/><stop offset="0.59" stop-color="#FFD000"/><stop offset="0.66" stop-color="#FF9000"/><stop offset="0.69" stop-color="#FF0000"/><stop offset="1" stop-color="#FF0000"/></linearGradient></defs>
<rect x="753.00" y="706.70" width="228.00" height="18.90" fill="url(#spec)"/>
<rect x="1001.10" y="528.30" width="277.00" height="204.00" fill="#FFFFFF"/>
<defs><linearGradient id="lbar" x1="0" y1="0" x2="0" y2="1"><stop offset="0" stop-color="#FFFFFF"/><stop offset="1" stop-color="#000000"/></linearGradient><clipPath id="oct"><path d="M1147.2 580.4 L1191.3 592.2 L1207.8 623.1 L1191.3 653 L1147.2 666.5 L1103.9 653 L1087 623.1 L1103.9 592.2 Z"/></clipPath><radialGradient id="octw" cx="0.5" cy="0.5" r="0.5"><stop offset="0" stop-color="#FFFFFF" stop-opacity="0.95"/><stop offset="0.55" stop-color="#FFFFFF" stop-opacity="0.45"/><stop offset="1" stop-color="#FFFFFF" stop-opacity="0"/></radialGradient></defs>
<line x1="1086.50" y1="576.00" x2="1086.50" y2="670.00" stroke="#EDEDED" stroke-width="1"/>
<line x1="1116.80" y1="576.00" x2="1116.80" y2="670.00" stroke="#EDEDED" stroke-width="1"/>
<line x1="1147.20" y1="576.00" x2="1147.20" y2="670.00" stroke="#EDEDED" stroke-width="1"/>
<line x1="1177.60" y1="576.00" x2="1177.60" y2="670.00" stroke="#EDEDED" stroke-width="1"/>
<line x1="1208.00" y1="576.00" x2="1208.00" y2="670.00" stroke="#EDEDED" stroke-width="1"/>
<line x1="1081.00" y1="580.20" x2="1214.00" y2="580.20" stroke="#EDEDED" stroke-width="1"/>
<line x1="1081.00" y1="601.80" x2="1214.00" y2="601.80" stroke="#EDEDED" stroke-width="1"/>
<line x1="1081.00" y1="623.20" x2="1214.00" y2="623.20" stroke="#EDEDED" stroke-width="1"/>
<line x1="1081.00" y1="645.00" x2="1214.00" y2="645.00" stroke="#EDEDED" stroke-width="1"/>
<line x1="1081.00" y1="666.70" x2="1214.00" y2="666.70" stroke="#EDEDED" stroke-width="1"/>
<foreignObject x="1087" y="580" width="121" height="87" clip-path="url(#oct)"><div style="width:121px;height:87px;background:conic-gradient(from 0deg at 60.2px 43.2px,#FFFF00 0deg,#FFB040 50deg,#FF2020 90deg,#B03080 130deg,#4030E0 180deg,#30B8FF 222deg,#20F0F0 240deg,#2A8A30 272deg,#98D838 312deg,#FFFF00 360deg)"></div></foreignObject>
<ellipse cx="1147.2" cy="623.2" rx="60" ry="43" fill="url(#octw)" clip-path="url(#oct)"/>
<rect x="1061.00" y="568.20" width="8.60" height="98.70" fill="url(#lbar)"/>
<text x="1056.70" y="571.70" font-size="9.6" fill="#9A9A9A" text-anchor="end">100</text>
<text x="1056.70" y="591.44" font-size="9.6" fill="#9A9A9A" text-anchor="end">80</text>
<text x="1056.70" y="611.18" font-size="9.6" fill="#9A9A9A" text-anchor="end">60</text>
<text x="1056.70" y="630.92" font-size="9.6" fill="#9A9A9A" text-anchor="end">40</text>
<text x="1056.70" y="650.66" font-size="9.6" fill="#9A9A9A" text-anchor="end">20</text>
<text x="1056.70" y="670.40" font-size="9.6" fill="#9A9A9A" text-anchor="end">0</text>
<text transform="translate(1037.3,617.4) rotate(-90)" font-size="9.6" fill="#9A9A9A" text-anchor="middle">L*</text>
<text x="1220.50" y="583.70" font-size="9.6" fill="#9A9A9A">100</text>
<text x="1220.50" y="605.33" font-size="9.6" fill="#9A9A9A">50</text>
<text x="1220.50" y="626.96" font-size="9.6" fill="#9A9A9A">0</text>
<text x="1220.50" y="648.59" font-size="9.6" fill="#9A9A9A">-50</text>
<text x="1220.50" y="670.22" font-size="9.6" fill="#9A9A9A">-100</text>
<text transform="translate(1250,623.3) rotate(-90)" font-size="9.6" fill="#9A9A9A" text-anchor="middle">b*</text>
<text x="1086.50" y="688.00" font-size="9.6" fill="#9A9A9A" text-anchor="middle">-100</text>
<text x="1116.90" y="688.00" font-size="9.6" fill="#9A9A9A" text-anchor="middle">-50</text>
<text x="1147.30" y="688.00" font-size="9.6" fill="#9A9A9A" text-anchor="middle">0</text>
<text x="1177.70" y="688.00" font-size="9.6" fill="#9A9A9A" text-anchor="middle">50</text>
<text x="1208.10" y="688.00" font-size="9.6" fill="#9A9A9A" text-anchor="middle">100</text>
<text x="1147.20" y="697.00" font-size="9.6" fill="#9A9A9A" text-anchor="middle">a*</text>
<line x1="1080.00" y1="623.20" x2="1215.00" y2="623.20" stroke="#111" stroke-width="1.6"/>
<line x1="1147.20" y1="573.60" x2="1147.20" y2="672.80" stroke="#111" stroke-width="1.6"/>
<path d="M1147.2 615.8 L1154.6 623.2 L1147.2 630.6 L1139.8 623.2 Z" fill="#0000E0"/>
<circle cx="1147.7" cy="623.2" r="5.5" fill="#78E81A"/>
<path d="M1089.8 557.2 L1096 563.4 L1089.8 569.6 L1083.6 563.4 Z" fill="#0000E0"/>
<text x="1101.00" y="567.60" font-size="12.4" fill="#111" textLength="50.50" lengthAdjust="spacingAndGlyphs">Standard</text>
<circle cx="1170.8" cy="563.4" r="6.8" fill="#78E81A"/>
<text x="1179.80" y="567.60" font-size="12.4" fill="#111" textLength="41.70" lengthAdjust="spacingAndGlyphs">Sample</text>
<rect x="0.00" y="732.60" width="1280.00" height="33.40" fill="#EFECEB"/>
<text x="7.00" y="754.80" font-size="13.8" fill="#000" textLength="18.50" lengthAdjust="spacingAndGlyphs">OK</text>
<rect x="1164.7" y="736.2" width="48.8" height="25.4" fill="#EFECEB" stroke="#B8B4B2" stroke-width="1"/>
<text x="1170.30" y="754.00" font-size="13.2" fill="#000" textLength="37.00" lengthAdjust="spacingAndGlyphs">AUTO</text>
<rect x="1215.5" y="736.2" width="59" height="25.4" fill="#EFECEB" stroke="#B8B4B2" stroke-width="1"/>
<rect x="0.00" y="30.00" width="1.30" height="736.00" fill="#2A72B8"/>
<rect x="1278.40" y="30.00" width="1.60" height="736.00" fill="#2070B0"/>
<rect x="0.00" y="765.00" width="1280.00" height="1.00" fill="#2A72B8"/></svg></body></html>
